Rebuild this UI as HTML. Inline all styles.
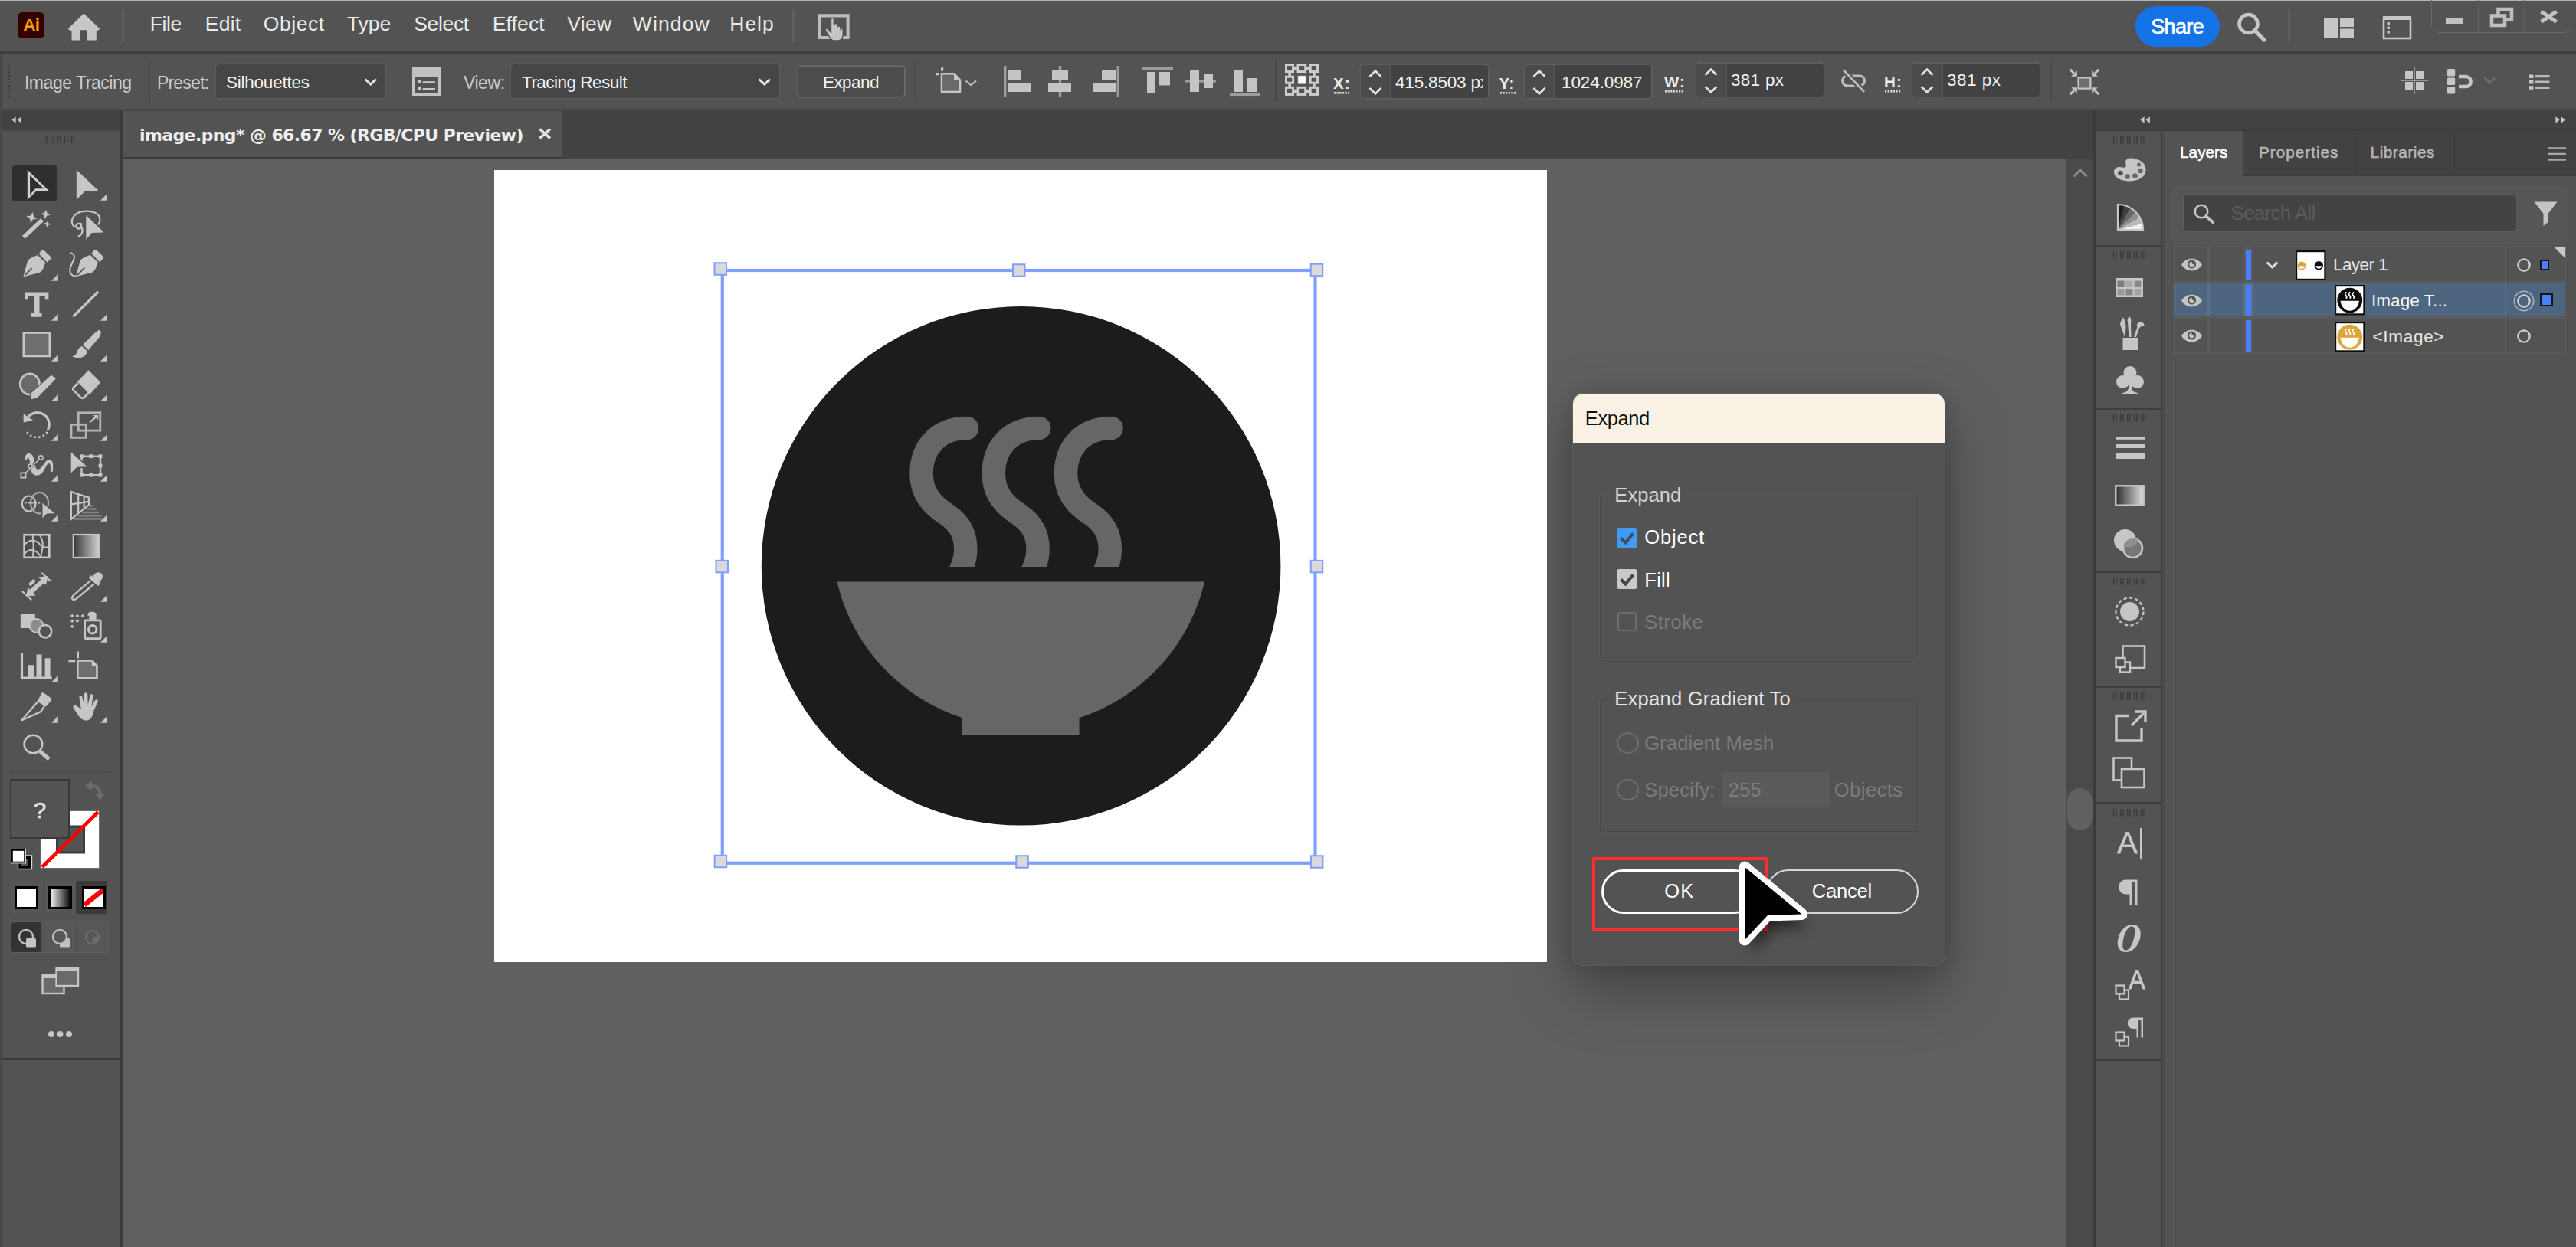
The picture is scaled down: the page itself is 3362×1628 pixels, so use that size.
<!DOCTYPE html>
<html lang="en"><head><meta charset="utf-8"><title>image.png* @ 66.67 % (RGB/CPU Preview)</title><style>
html,body{margin:0;padding:0;}
body{width:3362px;height:1628px;overflow:hidden;background:#606060;position:relative;
font-family:"Liberation Sans",sans-serif;}
#app{position:absolute;left:0;top:0;width:3362px;height:1628px;overflow:hidden;}
#app div,#app span,#app svg{position:absolute;display:block;}
#app span{white-space:pre;}
#app svg{overflow:visible;}
</style></head><body><div id="app">
<!-- canvas and frame -->
<div style="left:160px;top:207px;width:2536px;height:1421px;background:#606060;"></div>
<div style="left:2053px;top:514px;width:484.5px;height:745.5px;border-radius:13px;box-shadow:0 30px 80px 4px rgba(0,0,0,0.3),0 3px 26px rgba(0,0,0,0.14);"></div>
<div style="left:645px;top:221.5px;width:1374px;height:1034.5px;background:#ffffff;"></div><svg style="left:0px;top:0px;" width="3362" height="1628" viewBox="0 0 3362 1628"><circle cx="1332.6" cy="738.8" r="338.8" fill="#1d1c1a"/><clipPath id="bowlclip"><rect x="1080" y="759.5" width="510" height="179"/></clipPath><circle cx="1332.25" cy="702.7" r="246.6" fill="#666666" clip-path="url(#bowlclip)"/><rect x="1256" y="930" width="152.5" height="29" fill="#666666"/><clipPath id="steamclip"><rect x="1150" y="520" width="360" height="220"/></clipPath><path d="M 1262 559 C 1222 559, 1202.5 587, 1202.5 618 C 1202.5 646, 1219 661, 1236 672 C 1252 683, 1262 698, 1260 722 C 1259.5 730, 1257 738, 1253 746" transform="translate(0 0)" fill="none" stroke="#666666" stroke-width="30.5" stroke-linecap="round" clip-path="url(#steamclip)"/><path d="M 1262 559 C 1222 559, 1202.5 587, 1202.5 618 C 1202.5 646, 1219 661, 1236 672 C 1252 683, 1262 698, 1260 722 C 1259.5 730, 1257 738, 1253 746" transform="translate(94.25 0)" fill="none" stroke="#666666" stroke-width="30.5" stroke-linecap="round" clip-path="url(#steamclip)"/><path d="M 1262 559 C 1222 559, 1202.5 587, 1202.5 618 C 1202.5 646, 1219 661, 1236 672 C 1252 683, 1262 698, 1260 722 C 1259.5 730, 1257 738, 1253 746" transform="translate(188.5 0)" fill="none" stroke="#666666" stroke-width="30.5" stroke-linecap="round" clip-path="url(#steamclip)"/><rect x="942.75" y="353" width="773.75" height="773.75" fill="none" stroke="#7f9eff" stroke-width="4.2"/><rect x="932.5" y="343.25" width="15.5" height="15.5" fill="#d9d9d9" stroke="#7f9eff" stroke-width="2"/><rect x="1321.95" y="345.25" width="15.5" height="15.5" fill="#d9d9d9" stroke="#7f9eff" stroke-width="2"/><rect x="1710.75" y="344.75" width="15.5" height="15.5" fill="#d9d9d9" stroke="#7f9eff" stroke-width="2"/><rect x="934.45" y="731.85" width="15.5" height="15.5" fill="#d9d9d9" stroke="#7f9eff" stroke-width="2"/><rect x="1710.75" y="731.85" width="15.5" height="15.5" fill="#d9d9d9" stroke="#7f9eff" stroke-width="2"/><rect x="932.65" y="1116.75" width="15.5" height="15.5" fill="#d9d9d9" stroke="#7f9eff" stroke-width="2"/><rect x="1326.25" y="1117.25" width="15.5" height="15.5" fill="#d9d9d9" stroke="#7f9eff" stroke-width="2"/><rect x="1710.95" y="1117.25" width="15.5" height="15.5" fill="#d9d9d9" stroke="#7f9eff" stroke-width="2"/></svg>
<div style="left:2696px;top:207px;width:36px;height:1421px;background:#4a4a4a;"></div><svg style="left:2704px;top:218px;" width="22" height="16" viewBox="0 0 22 16"><path d="M2.5 12.5 L11 4 L19.5 12.5" fill="none" stroke="#8c8c8c" stroke-width="3"/></svg>
<div style="left:2698px;top:1029px;width:33px;height:54.5px;background:#606060;border-radius:16.5px;"></div>
<div style="left:0px;top:0px;width:3362px;height:67.5px;background:#535353;"></div>
<div style="left:0px;top:0px;width:3362px;height:1px;background:#b4b4b4;"></div>
<div style="left:0px;top:67px;width:3362px;height:2.5px;background:#3e3e3e;"></div>
<div style="left:0px;top:69.5px;width:3362px;height:73px;background:#535353;"></div>
<div style="left:0px;top:69.5px;width:2px;height:73px;background:#474747;"></div>
<div style="left:0px;top:142px;width:3362px;height:2.8px;background:#474747;"></div>
<div style="left:160px;top:144.6px;width:2572px;height:62.4px;background:#424242;"></div>
<div style="left:161px;top:145.3px;width:572.5px;height:60.2px;background:#535353;"></div>
<div style="left:161px;top:205px;width:572.5px;height:2px;background:#3c3c3c;"></div><span style="left:182.01px;top:165.76px;font-size:21.9px;line-height:21.9px;color:#eeeeee;font-family:'DejaVu Sans', 'Liberation Sans', sans-serif;font-weight:700;letter-spacing:-0.54px;">image.png* @ 66.67 % (RGB/CPU Preview)</span>
<svg style="left:702px;top:166px;" width="19" height="17" viewBox="0 0 19 17"><path d="M2.5 2.5 L16 14.5 M16 2.5 L2.5 14.5" stroke="#e4e4e4" stroke-width="3.6" fill="none"/></svg>
<div style="left:0px;top:144.6px;width:156.5px;height:24.2px;background:#424242;"></div>
<div style="left:0px;top:168.8px;width:156.5px;height:2.6px;background:#464646;"></div>
<div style="left:0px;top:171.4px;width:156.5px;height:1456.6px;background:#535353;border-radius:4px 0 0 0;"></div>
<div style="left:0px;top:144.6px;width:2px;height:1483.4px;background:#474747;"></div>
<div style="left:156.5px;top:144.6px;width:3.8px;height:1483.4px;background:#3a3a3a;"></div>
<div style="left:2px;top:1381px;width:154.5px;height:2.5px;background:#3a3a3a;"></div><svg style="left:15.2px;top:151.8px;" width="14" height="9" viewBox="0 0 14 9"><path d="M5.6 0.300 L5.600 8.700 L0.400 4.500 Z M12.800 0.300 L12.800 8.700 L7.600 4.500 Z" fill="#c8c8c8"/></svg>
<svg style="left:57.4px;top:177.7px;" width="42" height="9" viewBox="0 0 42 9"><rect x="0" y="0" width="1.400" height="9" fill="#3a3a3a"/><rect x="3.2" y="0" width="1.400" height="9" fill="#3a3a3a"/><rect x="8.97" y="0" width="1.400" height="9" fill="#3a3a3a"/><rect x="12.17" y="0" width="1.400" height="9" fill="#3a3a3a"/><rect x="17.94" y="0" width="1.400" height="9" fill="#3a3a3a"/><rect x="21.14" y="0" width="1.400" height="9" fill="#3a3a3a"/><rect x="26.91" y="0" width="1.400" height="9" fill="#3a3a3a"/><rect x="30.11" y="0" width="1.400" height="9" fill="#3a3a3a"/><rect x="35.88" y="0" width="1.400" height="9" fill="#3a3a3a"/><rect x="39.08" y="0" width="1.400" height="9" fill="#3a3a3a"/></svg>
<div style="left:2732px;top:144.6px;width:3.5px;height:1483.4px;background:#3a3a3a;"></div>
<div style="left:2735.5px;top:144.6px;width:626.5px;height:24.4px;background:#424242;"></div>
<div style="left:2735.5px;top:169px;width:626.5px;height:2.2px;background:#3d3d3d;"></div><svg style="left:2792.5px;top:151.8px;" width="14" height="9" viewBox="0 0 14 9"><path d="M5.600 0.300 L5.600 8.700 L0.400 4.500 Z M12.800 0.300 L12.800 8.700 L7.600 4.500 Z" fill="#c8c8c8"/></svg>
<svg style="left:3335.3px;top:151.8px;" width="14" height="9" viewBox="0 0 14 9"><path d="M0.400 0.300 L0.400 8.700 L5.600 4.500 Z M7.600 0.300 L7.600 8.700 L12.800 4.500 Z" fill="#c8c8c8"/></svg>
<div style="left:2735.5px;top:171px;width:84px;height:1457px;background:#535353;"></div>
<div style="left:2819.5px;top:171px;width:2.5px;height:1457px;background:#3a3a3a;"></div>
<div style="left:2822px;top:171px;width:2.5px;height:1457px;background:#4b4b4b;"></div>
<div style="left:2824.5px;top:171px;width:537.5px;height:1457px;background:#535353;"></div>
<!-- menu bar and control bar -->
<div style="left:22.7px;top:16px;width:35.2px;height:34px;background:#330000;border-radius:6px;"></div><span style="left:30.29px;top:21.95px;font-size:22.5px;line-height:22.5px;color:#ff9a00;font-weight:700;letter-spacing:-0.88px;">Ai</span>
<svg style="left:88px;top:17px;" width="44" height="37" viewBox="0 0 44 37"><path d="M21.3 0.5 L42.5 20.8 L37.8 24 L37.8 35.5 L25.6 35.5 L25.6 22.3 L17 22.3 L17 35.5 L5.5 35.5 L5.5 24 L0.5 20.8 Z" fill="#c6c6c6"/></svg>
<div style="left:159.3px;top:11.5px;width:3px;height:43.5px;background:#5e5e5e;"></div><span style="left:195.81px;top:17.57px;font-size:26.5px;line-height:26.5px;color:#eaeaea;letter-spacing:-0.44px;">File</span>
<span style="left:267.81px;top:17.57px;font-size:26.5px;line-height:26.5px;color:#eaeaea;letter-spacing:0.24px;">Edit</span>
<span style="left:343.81px;top:17.57px;font-size:26.5px;line-height:26.5px;color:#eaeaea;letter-spacing:0.56px;">Object</span>
<span style="left:452.81px;top:17.57px;font-size:26.5px;line-height:26.5px;color:#eaeaea;letter-spacing:-0.02px;">Type</span>
<span style="left:540.31px;top:17.57px;font-size:26.5px;line-height:26.5px;color:#eaeaea;letter-spacing:-0.35px;">Select</span>
<span style="left:642.81px;top:17.57px;font-size:26.5px;line-height:26.5px;color:#eaeaea;letter-spacing:0.12px;">Effect</span>
<span style="left:740.31px;top:17.57px;font-size:26.5px;line-height:26.5px;color:#eaeaea;letter-spacing:0.31px;">View</span>
<span style="left:825.81px;top:17.57px;font-size:26.5px;line-height:26.5px;color:#eaeaea;letter-spacing:1.13px;">Window</span>
<span style="left:952.31px;top:17.57px;font-size:26.5px;line-height:26.5px;color:#eaeaea;letter-spacing:0.96px;">Help</span>
<div style="left:1033.8px;top:11.5px;width:3px;height:43.5px;background:#5e5e5e;"></div><svg style="left:1066px;top:17px;" width="44" height="37" viewBox="0 0 44 37"><path d="M17.500 32 L3.300 32 L3.300 3.400 L40.600 3.400 L40.600 32 L34 32" fill="none" stroke="#bcbcbc" stroke-width="4.100"/><path d="M18.500 8.200 C18.500 5.800 22.300 5.800 22.300 8.200 L22.300 16 C22.800 12.800 26.500 12.800 26.800 15.500 L27 18.300 C27.500 16.300 30.500 16.500 30.800 18.800 L31 20.800 C31.800 19.300 34.200 19.800 34.200 22 L34.200 28 C34.200 32.500 31.500 35.900 28 35.900 L22.500 35.900 C19.500 35.900 17.800 33.500 15.500 29.500 L11.500 22.800 C10.300 20.800 12.800 19 14.500 21 L18.500 25.500 Z" fill="#c6c6c6" stroke="#535353" stroke-width="1.400"/></svg>
<div style="left:2787px;top:7.5px;width:109.5px;height:53.5px;background:#1473e6;border-radius:27px;"></div><span style="left:2807.28px;top:21.64px;font-size:27px;line-height:27px;color:#ffffff;letter-spacing:-0.65px;-webkit-text-stroke:0.7px #ffffff;">Share</span>
<svg style="left:2918px;top:14px;" width="42" height="42" viewBox="0 0 42 42"><circle cx="16.5" cy="17" r="12" fill="none" stroke="#c6c6c6" stroke-width="4.6"/><path d="M25 26 L37 38" stroke="#c6c6c6" stroke-width="5" stroke-linecap="round"/></svg>
<div style="left:2985.8px;top:11.5px;width:3px;height:43.5px;background:#5e5e5e;"></div><svg style="left:3033px;top:24px;" width="39" height="26" viewBox="0 0 39 26"><rect x="0" y="0" width="18" height="25.5" fill="#c6c6c6"/><rect x="21" y="0" width="18" height="11" fill="#c6c6c6"/><rect x="21" y="13.5" width="18" height="12" fill="#c6c6c6"/></svg>
<svg style="left:3109px;top:20px;" width="39" height="32" viewBox="0 0 39 32"><rect x="2" y="4" width="35" height="26" fill="none" stroke="#c6c6c6" stroke-width="2.6"/><rect x="1" y="1" width="37" height="5" fill="#c6c6c6"/><rect x="6.5" y="9" width="3.5" height="3.5" fill="#c6c6c6"/><rect x="6.5" y="14.5" width="3.5" height="3.5" fill="#c6c6c6"/><rect x="6.5" y="20" width="3.5" height="3.5" fill="#c6c6c6"/></svg>
<div style="left:3173px;top:-3px;width:183px;height:45.5px;border:1.5px solid #686868;border-radius:0 0 10px 10px;box-sizing:border-box;"></div>
<div style="left:3234px;top:0px;width:1.5px;height:42px;background:#626262;"></div>
<div style="left:3294px;top:0px;width:1.5px;height:42px;background:#626262;"></div>
<div style="left:3192px;top:23px;width:23px;height:8px;background:#c2c2c2;"></div><svg style="left:3248px;top:8px;" width="35" height="29" viewBox="0 0 35 29"><rect x="12.5" y="4" width="17.5" height="13.5" fill="none" stroke="#bdbdbd" stroke-width="4.600"/><rect x="4" y="12.500" width="17" height="12.500" fill="#535353" stroke="#bdbdbd" stroke-width="4.600"/></svg>
<svg style="left:3313px;top:13px;" width="27" height="18" viewBox="0 0 27 18"><path d="M3.5 2 L23.5 15.5 M23.5 2 L3.5 15.5" stroke="#c2c2c2" stroke-width="5"/></svg>
<svg style="left:9.5px;top:85px;" width="4" height="43" viewBox="0 0 4 43"><rect x="0" y="0" width="3" height="1.6" fill="#3d3d3d"/><rect x="0" y="4.4" width="3" height="1.6" fill="#3d3d3d"/><rect x="0" y="8.8" width="3" height="1.6" fill="#3d3d3d"/><rect x="0" y="13.2" width="3" height="1.6" fill="#3d3d3d"/><rect x="0" y="17.6" width="3" height="1.6" fill="#3d3d3d"/><rect x="0" y="22" width="3" height="1.6" fill="#3d3d3d"/><rect x="0" y="26.4" width="3" height="1.6" fill="#3d3d3d"/><rect x="0" y="30.8" width="3" height="1.6" fill="#3d3d3d"/><rect x="0" y="35.2" width="3" height="1.6" fill="#3d3d3d"/><rect x="0" y="39.6" width="3" height="1.6" fill="#3d3d3d"/></svg>
<span style="left:31.96px;top:97.03px;font-size:23px;line-height:23px;color:#cbcbcb;letter-spacing:-0.47px;">Image Tracing</span>
<div style="left:193.5px;top:78px;width:2px;height:55px;background:#4a4a4a;"></div><span style="left:204.97px;top:97.03px;font-size:23px;line-height:23px;color:#cbcbcb;letter-spacing:-0.8px;">Preset:</span>
<div style="left:282px;top:84px;width:221px;height:43.5px;background:#464646;border-radius:4px;box-shadow:0 0 0 1.5px #5c5c5c;"></div><span style="left:294.99px;top:96.95px;font-size:22.5px;line-height:22.5px;color:#f2f2f2;letter-spacing:-0.23px;">Silhouettes</span>
<svg style="left:474.5px;top:101.5px;" width="17.5" height="9.5" viewBox="0 0 17.5 9.5"><path d="M1.5 1.5 L8.75 8 L16 1.5" fill="none" stroke="#e8e8e8" stroke-width="3"/></svg>
<svg style="left:538px;top:88px;" width="37" height="37" viewBox="0 0 37 37"><rect x="0" y="0" width="37" height="37" fill="#c2c2c2"/><rect x="3.400" y="13" width="29.500" height="20.300" fill="#535353"/><rect x="6.900" y="16" width="5.200" height="5" fill="#c8c8c8"/><rect x="13.800" y="18.200" width="16.100" height="2.800" fill="#c8c8c8"/><rect x="6.900" y="24.900" width="5.200" height="4.900" fill="#c8c8c8"/><rect x="13.800" y="27" width="16.100" height="2.800" fill="#c8c8c8"/></svg>
<span style="left:604.97px;top:97.03px;font-size:23px;line-height:23px;color:#cbcbcb;letter-spacing:-0.44px;">View:</span>
<div style="left:667px;top:84px;width:350px;height:43.5px;background:#464646;border-radius:4px;box-shadow:0 0 0 1.5px #5c5c5c;"></div><span style="left:680.99px;top:96.95px;font-size:22.5px;line-height:22.5px;color:#f2f2f2;letter-spacing:-0.51px;">Tracing Result</span>
<svg style="left:989px;top:101.5px;" width="17.5" height="9.5" viewBox="0 0 17.5 9.5"><path d="M1.5 1.5 L8.75 8 L16 1.5" fill="none" stroke="#e8e8e8" stroke-width="3"/></svg>
<div style="left:1042px;top:87px;width:138px;height:39px;background:#4c4c4c;border-radius:4px;box-shadow:0 0 0 1.5px #6e6e6e;"></div><span style="left:1073.99px;top:96.95px;font-size:22.5px;line-height:22.5px;color:#f2f2f2;letter-spacing:-0.56px;">Expand</span>
<div style="left:1193.5px;top:78px;width:2px;height:55px;background:#4a4a4a;"></div><svg style="left:1220px;top:87px;" width="36" height="36" viewBox="0 0 36 36"><path d="M9.6 1.2 L9.6 5.8 M1.2 9.7 L6 9.7" stroke="#c6c6c6" stroke-width="3.2"/><path d="M8.900 9.200 L25.300 9.200 L33.100 17.400 L33.100 32.900 L8.900 32.900 Z" fill="#6a6a6a" stroke="#c6c6c6" stroke-width="2.400"/><path d="M25 8.400 L34 17.800 L25 17.800 Z" fill="#c6c6c6"/></svg>
<svg style="left:1258.7px;top:104.3px;" width="16.5" height="8.6" viewBox="0 0 16.5 8.6"><path d="M1.5 1.5 L8.25 7.1 L15 1.5" fill="none" stroke="#b5b5b5" stroke-width="2.3"/></svg>
<svg style="left:0px;top:0px;" width="3362" height="140" viewBox="0 0 3362 140"><rect x="1310" y="86" width="3.4" height="41" fill="#9d9d9d"/><rect x="1316" y="91" width="17" height="13" fill="#c4c4c4"/><rect x="1316" y="109" width="29" height="11" fill="#c4c4c4"/><rect x="1381.8" y="86" width="3.4" height="41" fill="#9d9d9d"/><rect x="1373" y="91" width="21" height="13" fill="#c4c4c4"/><rect x="1368" y="109" width="30" height="11" fill="#c4c4c4"/><rect x="1457.6" y="86" width="3.4" height="41" fill="#9d9d9d"/><rect x="1438" y="91" width="18" height="13" fill="#c4c4c4"/><rect x="1426" y="109" width="30" height="11" fill="#c4c4c4"/><rect x="1491" y="88" width="40" height="3.6" fill="#9d9d9d"/><rect x="1497" y="94" width="11" height="27.5" fill="#c4c4c4"/><rect x="1513" y="94" width="14" height="17.5" fill="#c4c4c4"/><rect x="1547" y="104" width="40" height="3.6" fill="#9d9d9d"/><rect x="1553" y="91" width="12" height="29" fill="#c4c4c4"/><rect x="1571" y="96" width="12" height="19" fill="#c4c4c4"/><rect x="1605" y="121.5" width="40" height="3.6" fill="#9d9d9d"/><rect x="1611" y="91" width="11" height="29" fill="#c4c4c4"/><rect x="1627" y="102" width="14" height="18" fill="#c4c4c4"/></svg>
<div style="left:1664px;top:78px;width:2px;height:55px;background:#4a4a4a;"></div><svg style="left:1676.5px;top:83px;" width="45" height="42" viewBox="0 0 45 42"><rect x="1.5" y="1.5" width="9.1" height="9.1" fill="none" stroke="#cdcdcd" stroke-width="3"/><rect x="17" y="1.5" width="9.7" height="9.1" fill="none" stroke="#cdcdcd" stroke-width="3"/><rect x="33.2" y="1.5" width="9.4" height="9.1" fill="none" stroke="#cdcdcd" stroke-width="3"/><rect x="1.5" y="17.3" width="9.1" height="7.9" fill="none" stroke="#cdcdcd" stroke-width="3"/><rect x="33.2" y="17.3" width="9.4" height="7.9" fill="none" stroke="#cdcdcd" stroke-width="3"/><rect x="1.5" y="31.3" width="9.1" height="9.1" fill="none" stroke="#cdcdcd" stroke-width="3"/><rect x="17" y="31.3" width="9.7" height="9.1" fill="none" stroke="#cdcdcd" stroke-width="3"/><rect x="33.2" y="31.3" width="9.4" height="9.1" fill="none" stroke="#cdcdcd" stroke-width="3"/><rect x="11.8" y="3.9" width="4" height="4.3" fill="#cdcdcd"/><rect x="27.9" y="3.9" width="4.1" height="4.3" fill="#cdcdcd"/><rect x="11.8" y="33.7" width="4" height="4.3" fill="#cdcdcd"/><rect x="27.9" y="33.7" width="4.1" height="4.3" fill="#cdcdcd"/><rect x="4.3" y="11.8" width="3.7" height="4.3" fill="#cdcdcd"/><rect x="4.3" y="26.4" width="3.7" height="3.7" fill="#cdcdcd"/><rect x="36" y="11.8" width="3.7" height="4.3" fill="#cdcdcd"/><rect x="36" y="26.4" width="3.7" height="3.7" fill="#cdcdcd"/><rect x="16.8" y="15.8" width="11.2" height="10.9" fill="#d6d6d6"/><rect x="17.8" y="16.7" width="9.200" height="8" fill="#ffffff"/></svg>
<span style="left:1740.08px;top:98.65px;font-size:20.5px;line-height:20.5px;color:#ececec;font-weight:700;letter-spacing:1.34px;">X:</span>
<svg style="left:1741px;top:119.5px;" width="22" height="3" viewBox="0 0 22 3"><rect x="0" y="0" width="2.2" height="2.6" fill="#d8d8d8"/><rect x="3.6" y="0" width="2.2" height="2.6" fill="#d8d8d8"/><rect x="7.2" y="0" width="2.2" height="2.6" fill="#d8d8d8"/><rect x="10.8" y="0" width="2.2" height="2.6" fill="#d8d8d8"/><rect x="14.4" y="0" width="2.2" height="2.6" fill="#d8d8d8"/><rect x="18" y="0" width="2.2" height="2.6" fill="#d8d8d8"/></svg>
<div style="left:1776px;top:84.5px;width:165.5px;height:43px;background:#424242;border-radius:4px;box-shadow:0 0 0 1.5px #5e5e5e;"></div>
<div style="left:1776px;top:84.5px;width:38px;height:43px;background:#4b4b4b;border-radius:4px 0 0 4px;"></div>
<div style="left:1814px;top:84.5px;width:2px;height:43px;background:#5a5a5a;"></div><svg style="left:1786px;top:89.5px;" width="18" height="12" viewBox="0 0 18 12"><path d="M1.5 10 L9 2.5 L16.5 10" fill="none" stroke="#e4e4e4" stroke-width="2.6"/></svg>
<svg style="left:1786px;top:112.5px;" width="18" height="12" viewBox="0 0 18 12"><path d="M1.5 2 L9 9.5 L16.5 2" fill="none" stroke="#e4e4e4" stroke-width="2.6"/></svg>
<div style="left:1818px;top:86px;width:117.5px;height:40px;overflow:hidden;"><span style="left:2.99px;top:11.45px;font-size:22.5px;line-height:22.5px;color:#f2f2f2;letter-spacing:-0.18px;">415.8503 px</span>
</div><span style="left:1956.58px;top:98.65px;font-size:20.5px;line-height:20.5px;color:#ececec;font-weight:700;letter-spacing:0.87px;">Y:</span>
<svg style="left:1957.5px;top:119.5px;" width="20" height="3" viewBox="0 0 20 3"><rect x="0" y="0" width="2.2" height="2.6" fill="#d8d8d8"/><rect x="3.6" y="0" width="2.2" height="2.6" fill="#d8d8d8"/><rect x="7.2" y="0" width="2.2" height="2.6" fill="#d8d8d8"/><rect x="10.8" y="0" width="2.2" height="2.6" fill="#d8d8d8"/><rect x="14.4" y="0" width="2.2" height="2.6" fill="#d8d8d8"/><rect x="18" y="0" width="2.2" height="2.6" fill="#d8d8d8"/></svg>
<div style="left:1990px;top:84.5px;width:165px;height:43px;background:#424242;border-radius:4px;box-shadow:0 0 0 1.5px #5e5e5e;"></div>
<div style="left:1990px;top:84.5px;width:38px;height:43px;background:#4b4b4b;border-radius:4px 0 0 4px;"></div>
<div style="left:2028px;top:84.5px;width:2px;height:43px;background:#5a5a5a;"></div><svg style="left:2000px;top:89.5px;" width="18" height="12" viewBox="0 0 18 12"><path d="M1.5 10 L9 2.5 L16.5 10" fill="none" stroke="#e4e4e4" stroke-width="2.6"/></svg>
<svg style="left:2000px;top:112.5px;" width="18" height="12" viewBox="0 0 18 12"><path d="M1.5 2 L9 9.5 L16.5 2" fill="none" stroke="#e4e4e4" stroke-width="2.6"/></svg>
<span style="left:2037.99px;top:97.45px;font-size:22.5px;line-height:22.5px;color:#f2f2f2;letter-spacing:-0.1px;">1024.0987</span>
<span style="left:2172.08px;top:96.65px;font-size:20.5px;line-height:20.5px;color:#ececec;font-weight:700;letter-spacing:1.04px;">W:</span>
<svg style="left:2173px;top:117.5px;" width="27" height="3" viewBox="0 0 27 3"><rect x="0" y="0" width="2.2" height="2.6" fill="#d8d8d8"/><rect x="3.6" y="0" width="2.2" height="2.6" fill="#d8d8d8"/><rect x="7.2" y="0" width="2.2" height="2.6" fill="#d8d8d8"/><rect x="10.8" y="0" width="2.2" height="2.6" fill="#d8d8d8"/><rect x="14.4" y="0" width="2.2" height="2.6" fill="#d8d8d8"/><rect x="18" y="0" width="2.2" height="2.6" fill="#d8d8d8"/><rect x="21.6" y="0" width="2.2" height="2.6" fill="#d8d8d8"/></svg>
<div style="left:2213.5px;top:82.5px;width:166.5px;height:43px;background:#424242;border-radius:4px;box-shadow:0 0 0 1.5px #5e5e5e;"></div>
<div style="left:2213.5px;top:82.5px;width:38px;height:43px;background:#4b4b4b;border-radius:4px 0 0 4px;"></div>
<div style="left:2251.5px;top:82.5px;width:2px;height:43px;background:#5a5a5a;"></div><svg style="left:2223.5px;top:87.5px;" width="18" height="12" viewBox="0 0 18 12"><path d="M1.5 10 L9 2.5 L16.5 10" fill="none" stroke="#e4e4e4" stroke-width="2.6"/></svg>
<svg style="left:2223.5px;top:110.5px;" width="18" height="12" viewBox="0 0 18 12"><path d="M1.5 2 L9 9.5 L16.5 2" fill="none" stroke="#e4e4e4" stroke-width="2.6"/></svg>
<span style="left:2258.99px;top:94.25px;font-size:22.5px;line-height:22.5px;color:#f2f2f2;letter-spacing:0.29px;">381 px</span>
<svg style="left:2402px;top:89px;" width="36" height="33" viewBox="0 0 36 33"><rect x="2.5" y="10" width="29" height="13" rx="6.500" fill="none" stroke="#bdbdbd" stroke-width="3"/><path d="M4 2.5 L31 31" stroke="#535353" stroke-width="7"/><path d="M4 2.5 L31 31" stroke="#bdbdbd" stroke-width="2.600"/></svg>
<span style="left:2459.08px;top:96.65px;font-size:20.5px;line-height:20.5px;color:#ececec;font-weight:700;letter-spacing:1.21px;">H:</span>
<svg style="left:2460px;top:118px;" width="23" height="3" viewBox="0 0 23 3"><rect x="0" y="0" width="2.2" height="2.6" fill="#d8d8d8"/><rect x="3.6" y="0" width="2.2" height="2.6" fill="#d8d8d8"/><rect x="7.2" y="0" width="2.2" height="2.6" fill="#d8d8d8"/><rect x="10.8" y="0" width="2.2" height="2.6" fill="#d8d8d8"/><rect x="14.4" y="0" width="2.2" height="2.6" fill="#d8d8d8"/><rect x="18" y="0" width="2.2" height="2.6" fill="#d8d8d8"/></svg>
<div style="left:2495.5px;top:82.5px;width:166.5px;height:43px;background:#424242;border-radius:4px;box-shadow:0 0 0 1.5px #5e5e5e;"></div>
<div style="left:2495.5px;top:82.5px;width:38.5px;height:43px;background:#4b4b4b;border-radius:4px 0 0 4px;"></div>
<div style="left:2534px;top:82.5px;width:2px;height:43px;background:#5a5a5a;"></div><svg style="left:2505.75px;top:87.5px;" width="18" height="12" viewBox="0 0 18 12"><path d="M1.5 10 L9 2.5 L16.5 10" fill="none" stroke="#e4e4e4" stroke-width="2.6"/></svg>
<svg style="left:2505.75px;top:110.5px;" width="18" height="12" viewBox="0 0 18 12"><path d="M1.5 2 L9 9.5 L16.5 2" fill="none" stroke="#e4e4e4" stroke-width="2.6"/></svg>
<span style="left:2540.99px;top:94.25px;font-size:22.5px;line-height:22.5px;color:#f2f2f2;letter-spacing:0.49px;">381 px</span>
<div style="left:2675.5px;top:78px;width:2px;height:55px;background:#4a4a4a;"></div><svg style="left:2700.5px;top:89.5px;" width="39" height="34" viewBox="0 0 39 34"><rect x="11.600" y="11.400" width="15.800" height="14.200" fill="#6e6e6e" stroke="#c6c6c6" stroke-width="2.200"/><path d="M0.8 0.8 l5 5" stroke="#c6c6c6" stroke-width="3"/><path d="M9.8 9.8 l-7.6 0 l7.6 -7.6 Z" fill="#c6c6c6"/><path d="M38.2 0.8 l-5 5" stroke="#c6c6c6" stroke-width="3"/><path d="M29.2 9.8 l7.6 0 l-7.6 -7.6 Z" fill="#c6c6c6"/><path d="M0.8 33.2 l5 -5" stroke="#c6c6c6" stroke-width="3"/><path d="M9.8 24.2 l-7.6 0 l7.6 7.6 Z" fill="#c6c6c6"/><path d="M38.2 33.2 l-5 -5" stroke="#c6c6c6" stroke-width="3"/><path d="M29.2 24.2 l7.6 0 l-7.6 7.6 Z" fill="#c6c6c6"/></svg>
<svg style="left:3133.3px;top:87px;" width="36" height="37" viewBox="0 0 36 37"><rect x="6" y="6" width="10" height="10" fill="#c6c6c6"/><rect x="20" y="6" width="10" height="10" fill="#c6c6c6"/><rect x="6" y="20" width="10" height="10" fill="#c6c6c6"/><rect x="20" y="20" width="10" height="10" fill="#c6c6c6"/><path d="M18 0 L18 36 M0 18 L36 18" stroke="#9a9a9a" stroke-width="1.8"/></svg>
<svg style="left:3192px;top:89px;" width="37" height="35" viewBox="0 0 37 35"><rect x="2" y="1" width="10.200" height="9.500" rx="1.500" fill="#c6c6c6"/><rect x="2" y="12.500" width="10.200" height="9.500" rx="1.500" fill="#c6c6c6"/><rect x="2" y="24" width="10.200" height="9.500" rx="1.500" fill="#c6c6c6"/><path d="M17 11 L26 11 C35 11 35 24 26 24 L17 24" fill="none" stroke="#c6c6c6" stroke-width="4.4"/></svg>
<svg style="left:3241px;top:100px;" width="16.5" height="9.5" viewBox="0 0 16.5 9.5"><path d="M1.5 1.5 L8.25 8 L15 1.5" fill="none" stroke="#6f6f6f" stroke-width="2.4"/></svg>
<svg style="left:3300.5px;top:96.5px;" width="28" height="21" viewBox="0 0 28 21"><path d="M0 2.700 L5.400 2.700 M0 10.200 L5.400 10.200 M0 17.500 L5.400 17.500" stroke="#c6c6c6" stroke-width="4.400"/><path d="M7.500 2.700 L26.500 2.700 M7.500 10.200 L26.500 10.200 M7.500 17.500 L26.500 17.500" stroke="#b9b9b9" stroke-width="3.200"/></svg>
<!-- tools panel -->
<div style="left:16px;top:216px;width:59px;height:46.7px;background:#2f2f2f;border-radius:3.5px;"></div><svg style="left:22.5px;top:215.5px;" width="48" height="48" viewBox="0 0 48 48"><path d="M12.8 5.8 L41 33.3 L24.5 33.3 L12.8 45 Z" fill="#d2d2d2"/><path d="M16.1 13 L34.2 30.3 L23.2 30.3 L16.1 38.3 Z" fill="#2f2f2f"/></svg>
<svg style="left:90px;top:215.5px;" width="48" height="48" viewBox="0 0 48 48"><path d="M9.8 5.800 L37.900 32.200 L37.900 33.800 L21 33.800 L9.800 44.500 Z" fill="#c6c6c6"/></svg>
<svg style="left:131.4px;top:252.7px;" width="8.8" height="8.8" viewBox="0 0 8.8 8.8"><path d="M8.8 0 L8.8 8.8 L0 8.8 Z" fill="#c6c6c6"/></svg>
<svg style="left:22.5px;top:267.95px;" width="48" height="48" viewBox="0 0 48 48"><path d="M9.700 43.800 L5.900 40 L30.200 17.100 L34 21 Z" fill="#c6c6c6"/><path d="M19.9 8.96 L20.82 14.43 L25.44 17.5 L19.97 18.42 L16.9 23.04 L15.98 17.57 L11.36 14.5 L16.83 13.58 Z" fill="#c6c6c6"/><path d="M37.36 5.66 L38.48 10.31 L42.64 12.66 L37.99 13.78 L35.64 17.94 L34.52 13.29 L30.36 10.94 L35.01 9.82 Z" fill="#c6c6c6"/><path d="M39.34 19.74 L40.17 23.19 L43.26 24.94 L39.81 25.77 L38.06 28.86 L37.23 25.41 L34.14 23.66 L37.59 22.83 Z" fill="#c6c6c6"/></svg>
<svg style="left:90px;top:267.95px;" width="48" height="48" viewBox="0 0 48 48"><path d="M22.300 7.600 C12 7.600 3.800 13.500 3.800 21.700 C3.800 26 7 28.500 10.500 28.300 M22.300 7.600 C33 7.600 40.400 11.500 40.400 18.200 C40.400 21 39.500 23.500 38 25.500" fill="none" stroke="#c6c6c6" stroke-width="2.200"/><circle cx="12.800" cy="27.300" r="3.400" fill="none" stroke="#c6c6c6" stroke-width="2.200"/><circle cx="15.800" cy="24.500" r="1.500" fill="#c6c6c6"/><path d="M16.300 29 C19 33 17.500 38.500 11.700 41.200" fill="none" stroke="#c6c6c6" stroke-width="2.200"/><path d="M22.300 13 L44.800 34.400 L44.800 35.500 L29.800 35.900 L22.300 44.700 Z" fill="#c6c6c6"/></svg>
<svg style="left:22.5px;top:320.4px;" width="48" height="48" viewBox="0 0 48 48"><path d="M7.300 41.600 L12.400 23 C13.300 19.800 15 18 18 16.600 L26 13 L36.300 22.900 L33.200 30.700 C32 33.600 30.200 35.300 27 36.300 Z" fill="#c6c6c6"/><path d="M9.800 39.200 L18.600 29.800" stroke="#535353" stroke-width="1.800"/><path d="M27.800 11.200 L30.800 7.300 C31.800 6 33.400 5.900 34.600 7 L42.600 14.700 C43.800 15.900 43.800 17.400 42.700 18.600 L38.300 22.400 Z" fill="#c6c6c6"/></svg>
<svg style="left:66.5px;top:357.6px;" width="8.8" height="8.8" viewBox="0 0 8.8 8.8"><path d="M8.8 0 L8.8 8.8 L0 8.8 Z" fill="#c6c6c6"/></svg>
<svg style="left:90px;top:320.4px;" width="48" height="48" viewBox="0 0 48 48"><g transform="translate(1.600 -0.300)"><path d="M7.300 41.600 L12.400 23 C13.300 19.800 15 18 18 16.600 L26 13 L36.300 22.900 L33.200 30.700 C32 33.600 30.200 35.300 27 36.300 Z" fill="#c6c6c6"/><path d="M9.800 39.200 L18.600 29.800" stroke="#535353" stroke-width="1.800"/><path d="M27.800 11.200 L30.800 7.300 C31.800 6 33.400 5.900 34.600 7 L42.600 14.700 C43.800 15.900 43.800 17.400 42.700 18.600 L38.300 22.400 Z" fill="#c6c6c6"/></g><path d="M1.600 9.900 C5.500 11 7.500 13 6.900 16.500 C6 22 1 27 1.200 33 C1.400 37.500 4 40.500 9.300 40.800" fill="none" stroke="#c6c6c6" stroke-width="2"/></svg>
<svg style="left:22.5px;top:372.85px;" width="48" height="48" viewBox="0 0 48 48"><path d="M9 8.600 L40.400 8.600 L40.400 18.300 L35.800 18.300 L35.800 13.500 L28.500 13.500 L28.500 36 L31.600 36 L31.600 40.800 L17.500 40.800 L17.500 36 L21.500 36 L21.500 13.500 L13.600 13.500 L13.600 18.300 L9 18.300 Z" fill="#c6c6c6"/></svg>
<svg style="left:66.5px;top:410.05px;" width="8.8" height="8.8" viewBox="0 0 8.8 8.8"><path d="M8.8 0 L8.8 8.8 L0 8.8 Z" fill="#c6c6c6"/></svg>
<svg style="left:90px;top:372.85px;" width="48" height="48" viewBox="0 0 48 48"><path d="M6.300 39.400 L37.200 8.700" stroke="#c6c6c6" stroke-width="3.400" stroke-linecap="round"/></svg>
<svg style="left:131.4px;top:410.05px;" width="8.8" height="8.8" viewBox="0 0 8.8 8.8"><path d="M8.8 0 L8.8 8.8 L0 8.8 Z" fill="#c6c6c6"/></svg>
<svg style="left:22.5px;top:425.3px;" width="48" height="48" viewBox="0 0 48 48"><rect x="7.800" y="9.500" width="34" height="30.500" fill="#6e6e6e" stroke="#c6c6c6" stroke-width="2.600"/></svg>
<svg style="left:66.5px;top:462.5px;" width="8.8" height="8.8" viewBox="0 0 8.8 8.8"><path d="M8.8 0 L8.8 8.8 L0 8.8 Z" fill="#c6c6c6"/></svg>
<svg style="left:90px;top:425.3px;" width="48" height="48" viewBox="0 0 48 48"><path d="M40.500 6.300 C42.500 7.800 42 11.500 39.500 15.500 L25.500 32 L18 25 L33 10.500 C36 7.500 39 5.300 40.500 6.300 Z" fill="#c6c6c6"/><path d="M17 27 L23.800 33.200 C23.500 40 15 45 4.200 40.600 C8 39.500 9.500 37.500 10.500 34.500 C11.700 30.500 14 27.700 17 27 Z" fill="#c6c6c6"/></svg>
<svg style="left:131.4px;top:462.5px;" width="8.8" height="8.8" viewBox="0 0 8.8 8.8"><path d="M8.8 0 L8.8 8.8 L0 8.8 Z" fill="#c6c6c6"/></svg>
<svg style="left:22.5px;top:477.75px;" width="48" height="48" viewBox="0 0 48 48"><ellipse cx="15.900" cy="23.500" rx="12.600" ry="13.600" fill="#6a6a6a" stroke="#c6c6c6" stroke-width="2.800"/><path d="M44 11.400 L49.800 16.500 L25.500 41.500 L17.300 43.300 L17.300 35.500 Z" fill="#535353" stroke="#535353" stroke-width="2.200" stroke-linejoin="round"/><path d="M44 11.400 L49.800 16.500 L25.500 41.500 L17.300 43.300 L17.300 35.500 Z" fill="#c6c6c6"/></svg>
<svg style="left:66.5px;top:514.95px;" width="8.8" height="8.8" viewBox="0 0 8.8 8.8"><path d="M8.8 0 L8.8 8.8 L0 8.8 Z" fill="#c6c6c6"/></svg>
<svg style="left:90px;top:477.75px;" width="48" height="48" viewBox="0 0 48 48"><path d="M25.400 5.200 L41.300 21.100 L27.200 36.900 L10.900 20.600 Z" fill="#c6c6c6"/><path d="M11.700 22 L6.300 27.500 C5 28.900 5 30.500 6.300 31.800 L15.300 40.800 C16.700 42.100 18.400 42 19.700 40.700 L25.700 35" fill="none" stroke="#c6c6c6" stroke-width="2.600"/></svg>
<svg style="left:131.4px;top:514.95px;" width="8.8" height="8.8" viewBox="0 0 8.8 8.8"><path d="M8.8 0 L8.8 8.8 L0 8.8 Z" fill="#c6c6c6"/></svg>
<svg style="left:22.5px;top:530.2px;" width="48" height="48" viewBox="0 0 48 48"><path d="M13.700 14.500 A15.400 15.400 0 0 1 39.400 31.200" fill="none" stroke="#c6c6c6" stroke-width="3.300"/><path d="M7.600 10.200 L7.600 21.600 L20.200 18.800 Z" fill="#c6c6c6"/><path d="M38.750 34.050 A16.300 16.300 0 0 1 10.400 31.070" fill="none" stroke="#c6c6c6" stroke-width="2.600" stroke-dasharray="2.400 3.300"/></svg>
<svg style="left:66.5px;top:567.4px;" width="8.8" height="8.8" viewBox="0 0 8.8 8.8"><path d="M8.8 0 L8.8 8.8 L0 8.8 Z" fill="#c6c6c6"/></svg>
<svg style="left:90px;top:530.2px;" width="48" height="48" viewBox="0 0 48 48"><rect x="3" y="24.300" width="19.300" height="17" fill="none" stroke="#b4b4b4" stroke-width="2.800"/><rect x="12.300" y="8.800" width="28.500" height="23.300" fill="none" stroke="#b4b4b4" stroke-width="2.800"/><path d="M27.200 21.500 L35.500 14" stroke="#c6c6c6" stroke-width="2.200"/><path d="M31.600 11.900 L38.200 11.900 L38.200 18.300 Z" fill="#c6c6c6"/></svg>
<svg style="left:131.4px;top:567.4px;" width="8.8" height="8.8" viewBox="0 0 8.8 8.8"><path d="M8.8 0 L8.8 8.8 L0 8.8 Z" fill="#c6c6c6"/></svg>
<svg style="left:22.5px;top:582.65px;" width="48" height="48" viewBox="0 0 48 48"><path d="M10.200 17.500 C8.700 11.500 12.500 8 16.300 9.300 C20.500 10.800 21.300 16 22.300 20.500 C23.300 25.500 23 29.500 26.500 29.800 C30.500 30 33 23.500 37 19.300 C40.300 15.800 45.300 16.500 46 22.500 C46.500 26.500 46 30 45.600 33 L42.800 33 C43 29 43.200 25.500 42.300 23.300 C41.500 21.300 39.800 22 38.300 24 C34.500 29.500 32.500 37.700 25 37.700 C17 37.700 17 28.500 16.200 21.500 C15.700 17.300 14.700 14.700 13.200 14.700 C12.200 14.700 12 16 12.500 17.500 Z" fill="#c6c6c6"/><path d="M7.300 37.500 L30.300 14.500" stroke="#535353" stroke-width="3.400"/><path d="M7.300 37.500 L30.300 14.500" stroke="#c6c6c6" stroke-width="1.400"/><rect x="4.300" y="34.400" width="6.200" height="6.200" fill="#535353" stroke="#c6c6c6" stroke-width="1.800"/><circle cx="16.600" cy="25.600" r="2.700" fill="#535353" stroke="#c6c6c6" stroke-width="1.500"/><circle cx="30.300" cy="14.500" r="2.700" fill="#535353" stroke="#c6c6c6" stroke-width="1.500"/></svg>
<svg style="left:66.5px;top:619.85px;" width="8.8" height="8.8" viewBox="0 0 8.8 8.8"><path d="M8.8 0 L8.8 8.8 L0 8.8 Z" fill="#c6c6c6"/></svg>
<svg style="left:90px;top:582.65px;" width="48" height="48" viewBox="0 0 48 48"><rect x="16.500" y="12.700" width="24.500" height="24.500" fill="none" stroke="#c6c6c6" stroke-width="2.400"/><rect x="14.1" y="34.8" width="4.800" height="4.800" fill="#c6c6c6"/><rect x="26.3" y="34.8" width="4.800" height="4.800" fill="#c6c6c6"/><rect x="38.6" y="34.8" width="4.800" height="4.800" fill="#c6c6c6"/><rect x="38.6" y="22.6" width="4.800" height="4.800" fill="#c6c6c6"/><rect x="38.6" y="10.3" width="4.800" height="4.800" fill="#c6c6c6"/><rect x="26.3" y="10.3" width="4.800" height="4.800" fill="#c6c6c6"/><rect x="14.1" y="10.3" width="4.800" height="4.800" fill="#c6c6c6"/><path d="M2 5.700 L23.700 25.600 L23.700 27 L10.700 27.500 L2 36.200 Z" fill="#c6c6c6" stroke="#535353" stroke-width="1.400"/></svg>
<svg style="left:131.4px;top:619.85px;" width="8.8" height="8.8" viewBox="0 0 8.8 8.8"><path d="M8.8 0 L8.8 8.8 L0 8.8 Z" fill="#c6c6c6"/></svg>
<svg style="left:22.5px;top:635.1px;" width="48" height="48" viewBox="0 0 48 48"><ellipse cx="14.600" cy="22.500" rx="8.800" ry="10" fill="none" stroke="#c6c6c6" stroke-width="2.200"/><ellipse cx="28.500" cy="21.600" rx="11.500" ry="13.800" fill="none" stroke="#a8a8a8" stroke-width="2.200"/><path d="M9.100 21.600 L31 21.600" stroke="#c6c6c6" stroke-width="1.800" stroke-dasharray="2.600 1.800"/><path d="M31.600 19.900 L49.300 34.900 L49.300 36 L38.500 36.300 L31.600 43.700 Z" fill="#c6c6c6" stroke="#535353" stroke-width="1.800"/></svg>
<svg style="left:66.5px;top:672.3px;" width="8.8" height="8.8" viewBox="0 0 8.8 8.8"><path d="M8.8 0 L8.8 8.8 L0 8.8 Z" fill="#c6c6c6"/></svg>
<svg style="left:90px;top:635.1px;" width="48" height="48" viewBox="0 0 48 48"><path d="M2.900 7.100 L25.900 14.600 L25.900 24.300 L2.900 42.800 Z M2.900 23.400 L25.900 19.900 M12.200 10.200 L12.200 35.200 M19.700 12.600 L19.700 29.300" fill="none" stroke="#c6c6c6" stroke-width="2.200"/><rect x="26.5" y="24.3" width="5.5" height="2.600" fill="#828282"/><rect x="22.5" y="28.3" width="13.1" height="2.600" fill="#828282"/><rect x="17" y="32.8" width="22.1" height="2.600" fill="#828282"/><rect x="11.8" y="37" width="30.8" height="2.600" fill="#828282"/><rect x="6" y="41.1" width="37.5" height="2.600" fill="#828282"/></svg>
<svg style="left:131.4px;top:672.3px;" width="8.8" height="8.8" viewBox="0 0 8.8 8.8"><path d="M8.8 0 L8.8 8.8 L0 8.8 Z" fill="#c6c6c6"/></svg>
<svg style="left:22.5px;top:687.55px;" width="48" height="48" viewBox="0 0 48 48"><rect x="8.600" y="10.200" width="32.700" height="29.600" fill="#4b4b4b" stroke="#c6c6c6" stroke-width="2.600"/><path d="M28.200 9.800 C32 15 33.500 21 32.600 26.500 C32 31 31 35 30 39.800 M32.600 26.500 L42 26.500 M8.700 23 C13 19 17 17 21 17.700 C25.500 18.500 29.500 22.500 32.600 26.500 M19.700 10.700 C20.800 20 20.800 30 20.100 38.900 M8.700 35.400 C12 31.500 15.500 29.700 18.400 30 C23 30.500 27 34 29.800 38" fill="none" stroke="#c6c6c6" stroke-width="1.900"/></svg>
<svg style="left:90px;top:687.55px;" width="48" height="48" viewBox="0 0 48 48"><defs><linearGradient id="tg" x1="0" x2="1" y1="0" y2="0"><stop offset="0" stop-color="#383838"/><stop offset="1" stop-color="#cfcfcf"/></linearGradient></defs><rect x="5.800" y="10" width="33.100" height="30" fill="url(#tg)" stroke="#c6c6c6" stroke-width="2.200"/></svg>
<svg style="left:22.5px;top:740px;" width="48" height="48" viewBox="0 0 48 48"><path d="M6 31.900 L18.400 43.400 M31.200 7.700 L43.100 18.700" stroke="#c6c6c6" stroke-width="2"/><path d="M17.500 32.500 L33.500 18" stroke="#c6c6c6" stroke-width="6"/><path d="M10.800 38.500 L13.500 27 L23.500 37.500 Z M39.700 12 L27 13.500 L37 23.500 Z" fill="#c6c6c6"/><path d="M16.800 22.500 L20.800 18.500" stroke="#c6c6c6" stroke-width="4.400" stroke-linecap="round"/></svg>
<svg style="left:90px;top:740px;" width="48" height="48" viewBox="0 0 48 48"><path d="M27.500 18.500 L6.500 36.500 C4 39 3.300 41 4.800 42.300 C6.300 43.600 8.500 43 11 40.500 L32.500 22.500" fill="none" stroke="#c6c6c6" stroke-width="2.300"/><path d="M25.500 14.500 L29 11 L31 13 C33 8 38.500 5.500 42 8.500 C45.500 11.500 44 16.500 39.500 19.500 L41.500 21.500 L38 25 Z" fill="#c6c6c6"/></svg>
<svg style="left:131.4px;top:777.2px;" width="8.8" height="8.8" viewBox="0 0 8.8 8.8"><path d="M8.8 0 L8.8 8.8 L0 8.8 Z" fill="#c6c6c6"/></svg>
<svg style="left:22.5px;top:792.45px;" width="48" height="48" viewBox="0 0 48 48"><rect x="3.800" y="9" width="19" height="19" fill="#c6c6c6"/><circle cx="24.500" cy="24.900" r="8.800" fill="#8c8c8c" stroke="#c6c6c6" stroke-width="2"/><circle cx="36" cy="32.200" r="8.200" fill="#535353" stroke="#c6c6c6" stroke-width="2.600"/></svg>
<svg style="left:90px;top:792.45px;" width="48" height="48" viewBox="0 0 48 48"><rect x="20.600" y="17.900" width="20.600" height="23.700" rx="1.500" fill="none" stroke="#c6c6c6" stroke-width="2.800"/><rect x="26.300" y="10.800" width="9.300" height="6" fill="#c6c6c6"/><path d="M24.500 11.700 L24.500 9.800 C24.500 5.800 35.600 5.800 35.600 9.800 L35.600 11.700 Z" fill="#c6c6c6"/><circle cx="30.700" cy="29.700" r="5.300" fill="none" stroke="#c6c6c6" stroke-width="3"/><path d="M2.3 12.1 l1.900 -1.900 l1.900 1.900 l-1.900 1.900 Z" fill="#c6c6c6" stroke="#c6c6c6" stroke-width="0.800"/><path d="M9 12.1 l1.900 -1.900 l1.900 1.900 l-1.900 1.900 Z" fill="#c6c6c6" stroke="#c6c6c6" stroke-width="0.800"/><path d="M16 12.1 l1.900 -1.900 l1.900 1.900 l-1.900 1.900 Z" fill="#c6c6c6" stroke="#c6c6c6" stroke-width="0.800"/><path d="M2.3 18.7 l1.900 -1.900 l1.900 1.900 l-1.900 1.900 Z" fill="#c6c6c6" stroke="#c6c6c6" stroke-width="0.800"/><path d="M9 18.7 l1.900 -1.900 l1.900 1.900 l-1.900 1.900 Z" fill="#c6c6c6" stroke="#c6c6c6" stroke-width="0.800"/><path d="M2.3 25.8 l1.900 -1.900 l1.900 1.900 l-1.900 1.900 Z" fill="#c6c6c6" stroke="#c6c6c6" stroke-width="0.800"/></svg>
<svg style="left:131.4px;top:829.65px;" width="8.8" height="8.8" viewBox="0 0 8.8 8.8"><path d="M8.8 0 L8.8 8.8 L0 8.8 Z" fill="#c6c6c6"/></svg>
<svg style="left:22.5px;top:844.9px;" width="48" height="48" viewBox="0 0 48 48"><path d="M5.500 7.300 L5.500 40.100 L44.800 40.100" fill="none" stroke="#c6c6c6" stroke-width="3.200"/><rect x="13.100" y="23.200" width="7.900" height="16" fill="#c6c6c6"/><rect x="24.500" y="9.500" width="7.100" height="30" fill="#c6c6c6"/><rect x="35.600" y="14.300" width="7" height="25" fill="#c6c6c6"/></svg>
<svg style="left:66.5px;top:882.1px;" width="8.8" height="8.8" viewBox="0 0 8.8 8.8"><path d="M8.8 0 L8.8 8.8 L0 8.8 Z" fill="#c6c6c6"/></svg>
<svg style="left:90px;top:844.9px;" width="48" height="48" viewBox="0 0 48 48"><path d="M11.800 5.500 L11.800 14.500 M-0.600 17.900 L8.200 17.900" stroke="#c6c6c6" stroke-width="2.500"/><path d="M11.300 17.400 L29.800 17.400 L36.500 24 L36.500 40.400 L11.300 40.400 Z" fill="#6e6e6e" stroke="#c6c6c6" stroke-width="2.600"/><path d="M29.800 16.500 L37.500 24 L29.800 24 Z" fill="#c6c6c6"/></svg>
<svg style="left:22.5px;top:897.35px;" width="48" height="48" viewBox="0 0 48 48"><path d="M5.100 43.500 L27 18.200 L35.500 23.500 L30.400 32 Z" fill="none" stroke="#c6c6c6" stroke-width="2.300" stroke-linejoin="miter"/><path d="M26.300 17.500 L30.800 8.500 C31.500 7 33 6.800 34.300 7.700 L43.200 14 C44.500 15 44.700 16.300 43.800 17.500 L37 25.500 Z" fill="#c6c6c6"/></svg>
<svg style="left:66.5px;top:934.55px;" width="8.8" height="8.8" viewBox="0 0 8.8 8.8"><path d="M8.8 0 L8.8 8.8 L0 8.8 Z" fill="#c6c6c6"/></svg>
<svg style="left:90px;top:897.35px;" width="48" height="48" viewBox="0 0 48 48"><g transform="translate(-0.200 3.200) scale(0.940 0.970)"><path d="M17 26 L14.500 10.500 C14 7.500 18 7 18.700 10 L21 21 L21.500 6.500 C21.500 3.500 26 3.500 26 6.500 L26.500 20.500 L29.500 8 C30.200 5 34.300 6 33.700 9 L31.500 22.500 L36.500 14.500 C38 12 41.500 14 40.200 16.500 L34.500 29 C33.500 35 31 41 25.500 41.500 C20 42 16 39 13 34.500 L6.500 25 C5 22.500 8 20 10.500 22 Z" fill="#c6c6c6"/></g></svg>
<svg style="left:131.4px;top:934.55px;" width="8.8" height="8.8" viewBox="0 0 8.8 8.8"><path d="M8.8 0 L8.8 8.8 L0 8.8 Z" fill="#c6c6c6"/></svg>
<svg style="left:22.5px;top:949.8px;" width="48" height="48" viewBox="0 0 48 48"><circle cx="20.350" cy="21.500" r="11.800" fill="none" stroke="#c6c6c6" stroke-width="2.600"/><path d="M29.200 30.800 L41 41" stroke="#c6c6c6" stroke-width="5" stroke-linecap="butt"/></svg>
<div style="left:13px;top:1006px;width:132px;height:1.5px;background:#474747;"></div><svg style="left:52px;top:1057px;" width="79" height="78" viewBox="0 0 79 78"><rect x="1.200" y="1.200" width="76.600" height="75.600" fill="#ffffff" stroke="#6e6e6e" stroke-width="1.600"/><rect x="22.500" y="22" width="35" height="34" fill="#535353" stroke="#3c3c3c" stroke-width="3"/><path d="M3 75 L76 3" stroke="#ff0000" stroke-width="4.600"/></svg>
<div style="left:13px;top:1017px;width:78px;height:78px;background:#535353;border:2px solid #383838;box-sizing:border-box;"></div><span style="left:43.45px;top:1043.11px;font-size:30px;line-height:30px;color:#e4e8ee;-webkit-text-stroke:0.5px #e4e8ee;">?</span>
<svg style="left:110px;top:1018px;" width="28" height="28" viewBox="0 0 28 28"><path d="M9 8 C18 8 20.500 12 20.500 19" fill="none" stroke="#6c6c6c" stroke-width="4"/><path d="M1 8 L10 1 L10 15 Z M20.500 27 L13.500 18 L27.500 18 Z" fill="#6c6c6c"/></svg>
<svg style="left:13.5px;top:1107.5px;" width="29" height="28" viewBox="0 0 29 28"><rect x="9.500" y="9" width="18" height="17.500" fill="#000000" stroke="#d8d8d8" stroke-width="1.400"/><rect x="13.500" y="13" width="9" height="9" fill="#535353"/><rect x="1.500" y="1.500" width="17" height="16.500" fill="#ffffff" stroke="#000000" stroke-width="2.600"/><rect x="0.5" y="0.5" width="19" height="18.500" fill="none" stroke="#d8d8d8" stroke-width="1"/></svg>
<div style="left:13px;top:1149.5px;width:127px;height:43px;background:#565656;border-radius:3px;"></div>
<div style="left:55.5px;top:1150px;width:1.5px;height:42px;background:#4c4c4c;"></div>
<div style="left:99px;top:1149.5px;width:41px;height:43px;background:#3a3a3a;border-radius:3px;"></div><svg style="left:18.5px;top:1156.5px;" width="31" height="30" viewBox="0 0 31 30"><rect x="1.500" y="1.500" width="28" height="27" fill="#ffffff" stroke="#000000" stroke-width="3"/></svg>
<svg style="left:62.5px;top:1156.5px;" width="31" height="30" viewBox="0 0 31 30"><defs><linearGradient id="cg" x1="0" x2="1" y1="0" y2="0"><stop offset="0" stop-color="#ffffff"/><stop offset="1" stop-color="#000000"/></linearGradient></defs><rect x="1.500" y="1.500" width="28" height="27" fill="url(#cg)" stroke="#000000" stroke-width="3"/></svg>
<svg style="left:106.5px;top:1156.5px;" width="31" height="30" viewBox="0 0 31 30"><rect x="1.500" y="1.500" width="28" height="27" fill="#ffffff" stroke="#000000" stroke-width="3"/><path d="M3 24.500 L28 4.500" stroke="#ff0000" stroke-width="6.500"/><rect x="1.500" y="1.500" width="28" height="27" fill="none" stroke="#000000" stroke-width="3"/></svg>
<div style="left:14.5px;top:1204px;width:126px;height:39px;background:#575757;border-radius:3px;box-shadow:0 0 0 1px #5e5e5e;"></div>
<div style="left:14.5px;top:1204px;width:39.5px;height:39px;background:#333333;border-radius:3px 0 0 3px;"></div>
<div style="left:98.5px;top:1204.5px;width:1.5px;height:38px;background:#4c4c4c;"></div><svg style="left:22px;top:1211.5px;" width="27" height="26" viewBox="0 0 27 26"><circle cx="12" cy="11" r="9" fill="none" stroke="#bdbdbd" stroke-width="2.400"/><rect x="12" y="13" width="13" height="11.500" rx="1.500" fill="#c4c4c4"/></svg>
<svg style="left:65.5px;top:1211.5px;" width="27" height="26" viewBox="0 0 27 26"><rect x="12" y="13" width="13" height="11.500" rx="1.500" fill="#c4c4c4"/><circle cx="12" cy="11" r="9" fill="#575757" stroke="#bdbdbd" stroke-width="2.400"/></svg>
<svg style="left:110px;top:1213px;" width="22" height="22" viewBox="0 0 22 22"><circle cx="10.500" cy="10.500" r="8.500" fill="none" stroke="#6c6c6c" stroke-width="2.200"/><path d="M10.500 10.500 L19 10.500 A8.500 8.500 0 0 1 10.500 19 Z" fill="#6c6c6c"/></svg>
<svg style="left:54px;top:1261.5px;" width="50" height="37" viewBox="0 0 50 37"><rect x="1.500" y="10.500" width="28" height="24.500" fill="#6a6a6a" stroke="#c6c6c6" stroke-width="2.400"/><rect x="1" y="10" width="29" height="5" fill="#c6c6c6"/><rect x="19.500" y="1.500" width="28.500" height="23.500" fill="#6a6a6a" stroke="#c6c6c6" stroke-width="2.400"/><rect x="19" y="1" width="29.500" height="5" fill="#c6c6c6"/></svg>
<svg style="left:62px;top:1345px;" width="34" height="10" viewBox="0 0 34 10"><circle cx="5" cy="5" r="4" fill="#c6c6c6"/><circle cx="16.500" cy="5" r="4" fill="#c6c6c6"/><circle cx="28" cy="5" r="4" fill="#c6c6c6"/></svg>
<!-- right dock -->
<div style="left:2735.5px;top:319.8px;width:84px;height:2px;background:#3d3d3d;"></div>
<div style="left:2735.5px;top:533.3px;width:84px;height:2px;background:#3d3d3d;"></div>
<div style="left:2735.5px;top:745.8px;width:84px;height:2px;background:#3d3d3d;"></div>
<div style="left:2735.5px;top:896.3px;width:84px;height:2px;background:#3d3d3d;"></div>
<div style="left:2735.5px;top:1046.8px;width:84px;height:2px;background:#3d3d3d;"></div>
<div style="left:2735.5px;top:1383.3px;width:84px;height:2px;background:#3d3d3d;"></div><svg style="left:2757.7px;top:177.5px;" width="43" height="10" viewBox="0 0 43 10"><rect x="0" y="0" width="1.400" height="9.500" fill="#3a3a3a"/><rect x="3.2" y="0" width="1.400" height="9.500" fill="#3a3a3a"/><rect x="8.97" y="0" width="1.400" height="9.500" fill="#3a3a3a"/><rect x="12.17" y="0" width="1.400" height="9.500" fill="#3a3a3a"/><rect x="17.94" y="0" width="1.400" height="9.500" fill="#3a3a3a"/><rect x="21.14" y="0" width="1.400" height="9.500" fill="#3a3a3a"/><rect x="26.91" y="0" width="1.400" height="9.500" fill="#3a3a3a"/><rect x="30.11" y="0" width="1.400" height="9.500" fill="#3a3a3a"/><rect x="35.88" y="0" width="1.400" height="9.500" fill="#3a3a3a"/><rect x="39.08" y="0" width="1.400" height="9.500" fill="#3a3a3a"/></svg>
<svg style="left:2757.7px;top:328px;" width="43" height="10" viewBox="0 0 43 10"><rect x="0" y="0" width="1.400" height="9.500" fill="#3a3a3a"/><rect x="3.2" y="0" width="1.400" height="9.500" fill="#3a3a3a"/><rect x="8.97" y="0" width="1.400" height="9.500" fill="#3a3a3a"/><rect x="12.17" y="0" width="1.400" height="9.500" fill="#3a3a3a"/><rect x="17.94" y="0" width="1.400" height="9.500" fill="#3a3a3a"/><rect x="21.14" y="0" width="1.400" height="9.500" fill="#3a3a3a"/><rect x="26.91" y="0" width="1.400" height="9.500" fill="#3a3a3a"/><rect x="30.11" y="0" width="1.400" height="9.500" fill="#3a3a3a"/><rect x="35.88" y="0" width="1.400" height="9.500" fill="#3a3a3a"/><rect x="39.08" y="0" width="1.400" height="9.500" fill="#3a3a3a"/></svg>
<svg style="left:2757.7px;top:541px;" width="43" height="10" viewBox="0 0 43 10"><rect x="0" y="0" width="1.400" height="9.500" fill="#3a3a3a"/><rect x="3.2" y="0" width="1.400" height="9.500" fill="#3a3a3a"/><rect x="8.97" y="0" width="1.400" height="9.500" fill="#3a3a3a"/><rect x="12.17" y="0" width="1.400" height="9.500" fill="#3a3a3a"/><rect x="17.94" y="0" width="1.400" height="9.500" fill="#3a3a3a"/><rect x="21.14" y="0" width="1.400" height="9.500" fill="#3a3a3a"/><rect x="26.91" y="0" width="1.400" height="9.500" fill="#3a3a3a"/><rect x="30.11" y="0" width="1.400" height="9.500" fill="#3a3a3a"/><rect x="35.88" y="0" width="1.400" height="9.500" fill="#3a3a3a"/><rect x="39.08" y="0" width="1.400" height="9.500" fill="#3a3a3a"/></svg>
<svg style="left:2757.7px;top:753.5px;" width="43" height="10" viewBox="0 0 43 10"><rect x="0" y="0" width="1.400" height="9.500" fill="#3a3a3a"/><rect x="3.2" y="0" width="1.400" height="9.500" fill="#3a3a3a"/><rect x="8.97" y="0" width="1.400" height="9.500" fill="#3a3a3a"/><rect x="12.17" y="0" width="1.400" height="9.500" fill="#3a3a3a"/><rect x="17.94" y="0" width="1.400" height="9.500" fill="#3a3a3a"/><rect x="21.14" y="0" width="1.400" height="9.500" fill="#3a3a3a"/><rect x="26.91" y="0" width="1.400" height="9.500" fill="#3a3a3a"/><rect x="30.11" y="0" width="1.400" height="9.500" fill="#3a3a3a"/><rect x="35.88" y="0" width="1.400" height="9.500" fill="#3a3a3a"/><rect x="39.08" y="0" width="1.400" height="9.500" fill="#3a3a3a"/></svg>
<svg style="left:2757.7px;top:904px;" width="43" height="10" viewBox="0 0 43 10"><rect x="0" y="0" width="1.400" height="9.500" fill="#3a3a3a"/><rect x="3.2" y="0" width="1.400" height="9.500" fill="#3a3a3a"/><rect x="8.97" y="0" width="1.400" height="9.500" fill="#3a3a3a"/><rect x="12.17" y="0" width="1.400" height="9.500" fill="#3a3a3a"/><rect x="17.94" y="0" width="1.400" height="9.500" fill="#3a3a3a"/><rect x="21.14" y="0" width="1.400" height="9.500" fill="#3a3a3a"/><rect x="26.91" y="0" width="1.400" height="9.500" fill="#3a3a3a"/><rect x="30.11" y="0" width="1.400" height="9.500" fill="#3a3a3a"/><rect x="35.88" y="0" width="1.400" height="9.500" fill="#3a3a3a"/><rect x="39.08" y="0" width="1.400" height="9.500" fill="#3a3a3a"/></svg>
<svg style="left:2757.7px;top:1055.5px;" width="43" height="10" viewBox="0 0 43 10"><rect x="0" y="0" width="1.400" height="9.500" fill="#3a3a3a"/><rect x="3.2" y="0" width="1.400" height="9.500" fill="#3a3a3a"/><rect x="8.97" y="0" width="1.400" height="9.500" fill="#3a3a3a"/><rect x="12.17" y="0" width="1.400" height="9.500" fill="#3a3a3a"/><rect x="17.94" y="0" width="1.400" height="9.500" fill="#3a3a3a"/><rect x="21.14" y="0" width="1.400" height="9.500" fill="#3a3a3a"/><rect x="26.91" y="0" width="1.400" height="9.500" fill="#3a3a3a"/><rect x="30.11" y="0" width="1.400" height="9.500" fill="#3a3a3a"/><rect x="35.88" y="0" width="1.400" height="9.500" fill="#3a3a3a"/><rect x="39.08" y="0" width="1.400" height="9.500" fill="#3a3a3a"/></svg>
<svg style="left:2758px;top:205px;" width="44" height="33" viewBox="0 0 44 33"><path d="M22 1.500 C34 1.500 42.500 8 42.500 16.500 C42.500 26 33 31.500 22 31.500 C9 31.500 1 26.500 1 19.500 C1 13.500 7 12 12 13.500 C16 14.500 17.500 12 16.500 9 C15 4.500 18 1.500 22 1.500 Z" fill="#c6c6c6"/><circle cx="9.500" cy="21" r="3.300" fill="#535353"/><circle cx="18.500" cy="25.500" r="3.300" fill="#686868"/><circle cx="28.500" cy="24.500" r="3.300" fill="#686868"/><circle cx="35.500" cy="18" r="3.300" fill="#686868"/><circle cx="33.500" cy="10" r="2.600" fill="#686868"/></svg>
<svg style="left:2762px;top:265.5px;" width="38" height="36" viewBox="0 0 38 36"><path d="M2 34 L2 1 A33 33 0 0 1 10.54 2.12 Z" fill="#1c1c1c"/><path d="M2 34 L10.54 2.12 A33 33 0 0 1 18.5 5.42 Z" fill="#3f3f3f"/><path d="M2 34 L18.5 5.42 A33 33 0 0 1 25.33 10.67 Z" fill="#686868"/><path d="M2 34 L25.33 10.67 A33 33 0 0 1 30.58 17.5 Z" fill="#909090"/><path d="M2 34 L30.58 17.5 A33 33 0 0 1 33.88 25.46 Z" fill="#b9b9b9"/><path d="M2 34 L33.88 25.46 A33 33 0 0 1 35 34 Z" fill="#f1f1f1"/><path d="M2 1 A33 33 0 0 1 35 34 L2 34 Z" fill="none" stroke="#c6c6c6" stroke-width="2.200"/></svg>
<svg style="left:2761px;top:362.5px;" width="36" height="25" viewBox="0 0 36 25"><rect x="0" y="0" width="36" height="25" fill="#c6c6c6"/><rect x="2.5" y="3.5" width="9" height="8.500" fill="#7e7e7e"/><rect x="13.5" y="3.5" width="9" height="8.500" fill="#a9a9a9"/><rect x="24.5" y="3.5" width="9" height="8.500" fill="#8a8a8a"/><rect x="2.5" y="14" width="9" height="8.500" fill="#9a9a9a"/><rect x="13.5" y="14" width="9" height="8.500" fill="#868686"/><rect x="24.5" y="14" width="9" height="8.500" fill="#a4a4a4"/></svg>
<svg style="left:2762px;top:412px;" width="38" height="46" viewBox="0 0 38 46"><rect x="8.500" y="29" width="20" height="16" fill="#c6c6c6"/><path d="M11 28 L5.500 13 C4 9 7.500 6 9 2 C11.500 7 13 13 12.500 17 Z" fill="#c6c6c6"/><path d="M16.500 28 L15 9 C14 6 15 2.500 17 1 C19.500 3 20 6.500 19 9.500 L19.500 28 Z" fill="#c6c6c6"/><path d="M23 28 L27.500 15 C25.500 12 28 8.500 31.500 8.500 C35 8.500 37 11 36.500 13.500 C34 13.500 31.500 14.500 30 16.500 L26 28 Z" fill="#c6c6c6"/></svg>
<svg style="left:2761px;top:477px;" width="38" height="38" viewBox="0 0 38 38"><circle cx="19" cy="9.500" r="8.500" fill="#c6c6c6"/><circle cx="9.500" cy="21.500" r="8.500" fill="#c6c6c6"/><circle cx="28.500" cy="21.500" r="8.500" fill="#c6c6c6"/><path d="M17 17 L21 17 L21 30 C22 33.500 25 35.500 29 36 L29 37.500 L9 37.500 L9 36 C13 35.500 16 33.500 17 30 Z" fill="#c6c6c6"/></svg>
<svg style="left:2760.5px;top:571px;" width="38" height="28" viewBox="0 0 38 28"><rect x="0" y="0" width="38" height="2.800" fill="#c6c6c6"/><rect x="0" y="9" width="38" height="5" fill="#c6c6c6"/><rect x="0" y="20" width="38" height="8" fill="#c6c6c6"/></svg>
<svg style="left:2760px;top:633px;" width="39" height="28" viewBox="0 0 39 28"><defs><linearGradient id="rg" x1="0" x2="1" y1="0" y2="0"><stop offset="0" stop-color="#2e2e2e"/><stop offset="1" stop-color="#e0e0e0"/></linearGradient></defs><rect x="1.300" y="1.300" width="36.400" height="25.400" fill="url(#rg)" stroke="#c6c6c6" stroke-width="2.400"/></svg>
<svg style="left:2757.5px;top:690px;" width="42" height="40" viewBox="0 0 42 40"><circle cx="15.500" cy="15.500" r="14.500" fill="#c6c6c6"/><circle cx="25.500" cy="25.500" r="12.500" fill="#767676" stroke="#c6c6c6" stroke-width="2.600"/><path d="M13.200 23 A12.500 12.500 0 0 1 33 15.500 A14.500 14.500 0 0 1 13.200 23 Z" fill="#8f8f8f"/></svg>
<svg style="left:2759px;top:778px;" width="41" height="41" viewBox="0 0 41 41"><circle cx="20.500" cy="20.500" r="18" fill="none" stroke="#c6c6c6" stroke-width="2.200" stroke-dasharray="4.500 3.100"/><circle cx="20.500" cy="20.500" r="12.500" fill="#c6c6c6"/></svg>
<svg style="left:2759.5px;top:842px;" width="41" height="38" viewBox="0 0 41 38"><rect x="10.500" y="1.500" width="28.500" height="28.500" fill="none" stroke="#c6c6c6" stroke-width="2.600"/><rect x="7" y="22.500" width="13" height="13" fill="#535353" stroke="#c6c6c6" stroke-width="2.400"/><rect x="1.500" y="17" width="12" height="12" fill="#535353" stroke="#c6c6c6" stroke-width="2.400"/></svg>
<svg style="left:2759.5px;top:927px;" width="42" height="42" viewBox="0 0 42 42"><path d="M19 7.500 L2 7.500 L2 40 L35 40 L35 23.500" fill="none" stroke="#c6c6c6" stroke-width="3.400"/><path d="M22 20 L38 4" stroke="#c6c6c6" stroke-width="3.400"/><path d="M27 2 L40 2 L40 15" fill="none" stroke="#c6c6c6" stroke-width="3.400"/></svg>
<svg style="left:2756.5px;top:988px;" width="44" height="42" viewBox="0 0 44 42"><rect x="1.500" y="1.500" width="23.500" height="29" fill="none" stroke="#c6c6c6" stroke-width="2.600"/><rect x="12" y="16" width="29.500" height="24" fill="#535353" stroke="#c6c6c6" stroke-width="2.600"/></svg>
<svg style="left:2761px;top:1079.5px;" width="38" height="42" viewBox="0 0 38 42"><path d="M1.500 34.500 L13.500 6 L17.500 6 L29.500 34.500 L25 34.500 L21.700 26 L9.300 26 L6 34.500 Z M10.700 22.500 L20.300 22.500 L15.500 10.500 Z" fill="#c6c6c6"/><rect x="32" y="1" width="2.400" height="40" fill="#c6c6c6"/></svg>
<svg style="left:2763px;top:1148px;" width="29" height="34" viewBox="0 0 29 34"><path d="M12 0.500 L26.500 0.500 L26.500 33.500 L23.500 33.500 L23.500 3.500 L19.500 3.500 L19.500 33.500 L16.500 33.500 L16.500 19.500 L12 19.500 C-1 19.500 -1 0.500 12 0.500 Z" fill="#c6c6c6"/></svg>
<svg style="left:2761px;top:1205.5px;" width="35" height="38" viewBox="0 0 35 38"><path d="M22 1 C30 1 34 7.500 32.500 17 C30.500 29 22 37 13.500 37 C5 37 1.500 30 3 21 C5 9 13.500 1 22 1 Z M21 3.500 C16.500 3.500 12 11 10 21 C8.500 30 9.500 34.500 13.500 34.500 C18 34.500 22.500 27 24.500 17 C26 9 25.500 3.500 21 3.500 Z" fill="#c6c6c6" fill-rule="evenodd"/></svg>
<svg style="left:2759.5px;top:1264.5px;" width="42" height="42" viewBox="0 0 42 42"><rect x="6" y="27.5" width="12" height="12" fill="#535353" stroke="#c6c6c6" stroke-width="2.200"/><rect x="1.500" y="21.5" width="11" height="11" fill="#535353" stroke="#c6c6c6" stroke-width="2.200"/><path d="M17.500 26.500 L27 1.500 L31 1.500 L40.500 26.500 L36.500 26.500 L33.700 19 L24.300 19 L21.500 26.500 Z M25.500 15.700 L32.500 15.700 L29 5.500 Z" fill="#c6c6c6"/></svg>
<svg style="left:2759.5px;top:1327.5px;" width="40" height="40" viewBox="0 0 40 40"><rect x="6" y="25.5" width="12" height="12" fill="#535353" stroke="#c6c6c6" stroke-width="2.200"/><rect x="1.500" y="19.5" width="11" height="11" fill="#535353" stroke="#c6c6c6" stroke-width="2.200"/><path d="M25 0.500 L37 0.500 L37 26.500 L34.500 26.500 L34.500 3 L31 3 L31 26.500 L28.500 26.500 L28.500 15 L25 15 C14 15 14 0.500 25 0.500 Z" fill="#c6c6c6"/></svg>
<div style="left:2927.5px;top:171px;width:434.5px;height:58.5px;background:#424242;"></div>
<div style="left:2927.5px;top:227.5px;width:434.5px;height:2px;background:#3c3c3c;"></div>
<div style="left:3073.5px;top:171px;width:1.5px;height:57px;background:#3b3b3b;"></div>
<div style="left:3202.5px;top:171px;width:1.5px;height:57px;background:#3b3b3b;"></div><span style="left:2845.07px;top:189.36px;font-size:20.6px;line-height:20.6px;color:#ffffff;letter-spacing:0.1px;-webkit-text-stroke:0.55px #ffffff;">Layers</span>
<span style="left:2948.07px;top:189.36px;font-size:20.6px;line-height:20.6px;color:#b6b6b6;letter-spacing:1.05px;-webkit-text-stroke:0.55px #b6b6b6;">Properties</span>
<span style="left:3093.57px;top:189.36px;font-size:20.6px;line-height:20.6px;color:#b6b6b6;letter-spacing:0.61px;-webkit-text-stroke:0.55px #b6b6b6;">Libraries</span>
<svg style="left:3326px;top:192px;" width="23" height="18" viewBox="0 0 23 18"><path d="M0 1.500 L23 1.500 M0 9 L23 9 M0 16.500 L23 16.500" stroke="#a8a8a8" stroke-width="2.400"/></svg>
<div style="left:2835.5px;top:244px;width:515px;height:73px;background:#565656;border-radius:5px;box-shadow:0 0 0 1px #595959;"></div>
<div style="left:2850px;top:254px;width:433.5px;height:47.5px;background:#434343;border-radius:5px;box-shadow:0 0 0 1.500px #5a5a5a;"></div><svg style="left:2862px;top:265px;" width="30" height="28" viewBox="0 0 30 28"><circle cx="11" cy="11" r="8.300" fill="none" stroke="#c6c6c6" stroke-width="2.600"/><path d="M17.500 17.500 L26 25" stroke="#c6c6c6" stroke-width="3.800" stroke-linecap="round"/></svg>
<span style="left:2911.33px;top:265.49px;font-size:26px;line-height:26px;color:#5b5b5b;letter-spacing:-0.69px;">Search All</span>
<svg style="left:3307px;top:263px;" width="32" height="33" viewBox="0 0 32 33"><path d="M0.500 0.500 L30.500 0.500 L18.500 16 L18.500 27 L12.500 32 L12.500 16 Z" fill="#c4c4c4"/></svg>
<div style="left:2836.5px;top:320.5px;width:512px;height:141px;background:#5a5a5a;"></div>
<div style="left:2836.3px;top:461px;width:1.2px;height:1167px;background:#5a5a5a;"></div>
<div style="left:3347.3px;top:461px;width:1.2px;height:1167px;background:#5a5a5a;"></div>
<div style="left:2836.5px;top:322.2px;width:511px;height:44.5px;background:#5a5a5a;"></div>
<div style="left:2837.6px;top:322.2px;width:42.5px;height:44.5px;background:#535353;"></div>
<div style="left:2884.1px;top:322.2px;width:43.3px;height:44.5px;background:#535353;"></div>
<div style="left:2940.2px;top:322.2px;width:328.8px;height:44.5px;background:#535353;"></div>
<div style="left:3271.2px;top:322.2px;width:76.3px;height:44.5px;background:#535353;"></div>
<div style="left:2836.5px;top:370px;width:511px;height:43.3px;background:#5b7189;"></div>
<div style="left:2837.6px;top:370px;width:42.5px;height:43.3px;background:#4d657f;"></div>
<div style="left:2884.1px;top:370px;width:43.3px;height:43.3px;background:#4d657f;"></div>
<div style="left:2940.2px;top:370px;width:328.8px;height:43.3px;background:#4d657f;"></div>
<div style="left:3271.2px;top:370px;width:76.3px;height:43.3px;background:#4d657f;"></div>
<div style="left:2836.5px;top:416px;width:511px;height:43.5px;background:#5a5a5a;"></div>
<div style="left:2837.6px;top:416px;width:42.5px;height:43.5px;background:#535353;"></div>
<div style="left:2884.1px;top:416px;width:43.3px;height:43.5px;background:#535353;"></div>
<div style="left:2940.2px;top:416px;width:328.8px;height:43.5px;background:#535353;"></div>
<div style="left:3271.2px;top:416px;width:76.3px;height:43.5px;background:#535353;"></div><svg style="left:2846.2px;top:336.4px;" width="29" height="19" viewBox="0 0 29 19"><path d="M1 9.500 C7 -1 22 -1 28 9.500 C22 20 7 20 1 9.500 Z" fill="#c4c4c4"/><circle cx="14.500" cy="9" r="5.600" fill="#535353"/><circle cx="14.500" cy="9" r="3.300" fill="#c4c4c4"/><circle cx="16.200" cy="7.200" r="1.700" fill="#535353"/></svg>
<svg style="left:2846.2px;top:382.8px;" width="29" height="19" viewBox="0 0 29 19"><path d="M1 9.500 C7 -1 22 -1 28 9.500 C22 20 7 20 1 9.500 Z" fill="#c4c4c4"/><circle cx="14.500" cy="9" r="5.600" fill="#535353"/><circle cx="14.500" cy="9" r="3.300" fill="#c4c4c4"/><circle cx="16.200" cy="7.200" r="1.700" fill="#535353"/></svg>
<svg style="left:2846.2px;top:429.3px;" width="29" height="19" viewBox="0 0 29 19"><path d="M1 9.500 C7 -1 22 -1 28 9.500 C22 20 7 20 1 9.500 Z" fill="#c4c4c4"/><circle cx="14.500" cy="9" r="5.600" fill="#535353"/><circle cx="14.500" cy="9" r="3.300" fill="#c4c4c4"/><circle cx="16.200" cy="7.200" r="1.700" fill="#535353"/></svg>
<div style="left:2931px;top:325.6px;width:7.3px;height:39.7px;background:#4a80ff;"></div>
<div style="left:2931px;top:371.9px;width:7.3px;height:40.1px;background:#4a80ff;"></div>
<div style="left:2931px;top:418px;width:7.3px;height:40.5px;background:#4a80ff;"></div><svg style="left:2957px;top:340.5px;" width="17" height="10" viewBox="0 0 17 10"><path d="M1.500 1.500 L8.500 8 L15.500 1.500" fill="none" stroke="#e0e0e0" stroke-width="2.800"/></svg>
<svg style="left:2996px;top:326.5px;" width="39.5" height="39" viewBox="0 0 39.5 39"><rect x="0" y="0" width="39.500" height="39" fill="#0d0d0d"/><rect x="2.200" y="2.200" width="35.100" height="34.600" fill="#ffffff"/><circle cx="8" cy="20" r="5.400" fill="#dda63a"/><path d="M4 20.500 L12 20.500 C11.500 25 4.500 25 4 20.500 Z" fill="#ffffff"/><circle cx="30.300" cy="19.800" r="5.700" fill="#0d0d0d"/><path d="M26.300 20.300 L34.300 20.300 C33.800 24.800 26.800 24.800 26.300 20.300 Z" fill="#ffffff"/></svg>
<span style="left:3044.99px;top:335.45px;font-size:22.5px;line-height:22.5px;color:#e6e6e6;letter-spacing:-0.59px;">Layer 1</span>
<svg style="left:3283.6px;top:335.6px;" width="20" height="20" viewBox="0 0 20 20"><circle cx="10" cy="10" r="7.700" fill="none" stroke="#d2d2d2" stroke-width="2.200"/></svg>
<div style="left:3314.9px;top:339px;width:12.6px;height:13.6px;background:#4a80ff;border:2px solid #161616;box-sizing:border-box;"></div><svg style="left:3333.7px;top:322.6px;" width="14.2" height="14.6" viewBox="0 0 14.2 14.6"><path d="M0 0 L14.200 0 L14.200 14.600 Z" fill="#c8c8c8"/></svg>
<svg style="left:3046.5px;top:372px;" width="39.5" height="39.5" viewBox="0 0 39.5 39.5"><rect x="0" y="0" width="39.5" height="39.5" fill="#0d0d0d"/><rect x="2.200" y="2.200" width="35.1" height="35.1" fill="#ffffff"/><circle cx="19.75" cy="20.05" r="16.400" fill="#0c0c0c"/><path d="M7.55 20.65 L31.95 20.65 C29.75 38.05 9.75 38.05 7.55 20.65 Z" fill="#ffffff"/><path d="M15.55 9.55 c-2.200 1.500 -2.200 3 -0.800 4.300 c1.300 1.300 1.300 2.600 0.300 4" fill="none" stroke="#ffffff" stroke-width="1.700"/><path d="M20.35 9.55 c-2.200 1.500 -2.200 3 -0.800 4.300 c1.300 1.300 1.300 2.600 0.300 4" fill="none" stroke="#ffffff" stroke-width="1.700"/><path d="M25.15 9.55 c-2.200 1.500 -2.200 3 -0.800 4.300 c1.300 1.300 1.300 2.600 0.300 4" fill="none" stroke="#ffffff" stroke-width="1.700"/></svg>
<span style="left:3094.99px;top:382.45px;font-size:22.5px;line-height:22.5px;color:#f4f4f4;letter-spacing:0.07px;">Image T...</span>
<svg style="left:3278.6px;top:378px;" width="30" height="30" viewBox="0 0 30 30"><circle cx="15" cy="15" r="12.700" fill="none" stroke="#a9b3bf" stroke-width="1.600"/><circle cx="15" cy="15" r="7.700" fill="none" stroke="#d2d2d2" stroke-width="2.200"/></svg>
<div style="left:3314.9px;top:383px;width:17.1px;height:17.1px;background:#4a80ff;border:2px solid #161616;box-sizing:border-box;"></div><svg style="left:3046.5px;top:419.5px;" width="39.5" height="39.5" viewBox="0 0 39.5 39.5"><rect x="0" y="0" width="39.5" height="39.5" fill="#0d0d0d"/><rect x="2.200" y="2.200" width="35.1" height="35.1" fill="#ffffff"/><circle cx="19.75" cy="20.05" r="16.400" fill="#dda63a"/><path d="M7.55 20.65 L31.95 20.65 C29.75 38.05 9.75 38.05 7.55 20.65 Z" fill="#ffffff"/><path d="M15.55 9.55 c-2.200 1.500 -2.200 3 -0.800 4.300 c1.300 1.300 1.300 2.600 0.300 4" fill="none" stroke="#ffffff" stroke-width="1.700"/><path d="M20.35 9.55 c-2.200 1.500 -2.200 3 -0.800 4.300 c1.300 1.300 1.300 2.600 0.300 4" fill="none" stroke="#ffffff" stroke-width="1.700"/><path d="M25.15 9.55 c-2.200 1.500 -2.200 3 -0.800 4.300 c1.300 1.300 1.300 2.600 0.300 4" fill="none" stroke="#ffffff" stroke-width="1.700"/></svg>
<span style="left:3096.49px;top:428.95px;font-size:22.5px;line-height:22.5px;color:#e6e6e6;letter-spacing:0.7px;">&lt;Image&gt;</span>
<svg style="left:3283.6px;top:428.5px;" width="20" height="20" viewBox="0 0 20 20"><circle cx="10" cy="10" r="7.700" fill="none" stroke="#d2d2d2" stroke-width="2.200"/></svg>
<!-- expand dialog -->
<div style="left:2053px;top:514px;width:484.5px;height:745.5px;background:#535353;border-radius:13px;box-shadow:0 0 0 1px rgba(110,110,110,0.55);overflow:hidden;"><div style="left:0px;top:0px;width:484.5px;height:64.5px;background:#f9f1e4;"></div></div><span style="left:2068.85px;top:534.41px;font-size:25.5px;line-height:25.5px;color:#111111;letter-spacing:-0.44px;">Expand</span>
<div style="left:2087.5px;top:646.5px;width:415px;height:212.5px;border:1.500px solid #484848;border-radius:3px;box-sizing:border-box;box-shadow:0 0 0 1px rgba(255,255,255,0.035);"></div>
<div style="left:2101px;top:640px;width:100px;height:14px;background:#535353;"></div><span style="left:2107.35px;top:633.91px;font-size:25.5px;line-height:25.5px;color:#d2d2d2;letter-spacing:0.06px;">Expand</span>
<div style="left:2109.5px;top:688.5px;width:27.5px;height:26px;background:#3f9bf4;border-radius:3.500px;"></div><svg style="left:2109.5px;top:688.5px;" width="27.5" height="26" viewBox="0 0 27.5 26"><path d="M5.500 13.500 L11.500 19.500 L21.500 7.500" fill="none" stroke="#3d4f66" stroke-width="4"/></svg>
<span style="left:2146.35px;top:689.41px;font-size:25.5px;line-height:25.5px;color:#ffffff;letter-spacing:0.82px;">Object</span>
<div style="left:2109.5px;top:743px;width:27.5px;height:26px;background:#c9c9c9;border-radius:3.500px;"></div><svg style="left:2109.5px;top:743px;" width="27.5" height="26" viewBox="0 0 27.5 26"><path d="M5.500 13.500 L11.500 19.500 L21.500 7.500" fill="none" stroke="#444444" stroke-width="4"/></svg>
<span style="left:2146.35px;top:745.41px;font-size:25.5px;line-height:25.5px;color:#ffffff;letter-spacing:0.24px;">Fill</span>
<div style="left:2110.5px;top:798.5px;width:25.5px;height:25px;border:2.200px solid #6d6d6d;border-radius:3px;box-sizing:border-box;"></div><span style="left:2146.35px;top:799.91px;font-size:25.5px;line-height:25.5px;color:#7c7c7c;letter-spacing:0.52px;">Stroke</span>
<div style="left:2087.5px;top:913px;width:415px;height:172.5px;border:1.500px solid #484848;border-radius:3px;box-sizing:border-box;box-shadow:0 0 0 1px rgba(255,255,255,0.035);"></div>
<div style="left:2101px;top:906px;width:243px;height:14px;background:#535353;"></div><span style="left:2107.35px;top:899.91px;font-size:25.5px;line-height:25.5px;color:#e6e6e6;letter-spacing:0.26px;">Expand Gradient To</span>
<div style="left:2110px;top:955.5px;width:28.5px;height:28px;border:2.200px solid #6d6d6d;border-radius:50%;box-sizing:border-box;"></div><span style="left:2146.35px;top:958.41px;font-size:25.5px;line-height:25.5px;color:#7c7c7c;letter-spacing:0.13px;">Gradient Mesh</span>
<div style="left:2110px;top:1017px;width:28.5px;height:28px;border:2.200px solid #6d6d6d;border-radius:50%;box-sizing:border-box;"></div><span style="left:2146.35px;top:1019.41px;font-size:25.5px;line-height:25.5px;color:#7c7c7c;letter-spacing:0.16px;">Specify:</span>
<div style="left:2246.5px;top:1008px;width:141.5px;height:45.5px;background:#5a5a5a;border-radius:4px;"></div><span style="left:2255.85px;top:1019.41px;font-size:25.5px;line-height:25.5px;color:#7c7c7c;letter-spacing:0.12px;">255</span>
<span style="left:2393.85px;top:1019.41px;font-size:25.5px;line-height:25.5px;color:#7c7c7c;letter-spacing:0.47px;">Objects</span>
<div style="left:2078px;top:1119px;width:230px;height:96.5px;border:4.500px solid #ff2d2d;box-sizing:border-box;"></div>
<div style="left:2090px;top:1134.5px;width:202px;height:58px;border:3.400px solid #ffffff;border-radius:29px;box-sizing:border-box;"></div><span style="left:2172.35px;top:1151.41px;font-size:25.5px;line-height:25.5px;color:#ffffff;letter-spacing:0.95px;">OK</span>
<div style="left:2305px;top:1134.5px;width:199px;height:58px;border:2.200px solid #d6d6d6;border-radius:29px;box-sizing:border-box;"></div><span style="left:2364.85px;top:1151.41px;font-size:25.5px;line-height:25.5px;color:#ffffff;letter-spacing:-0.22px;">Cancel</span>
<svg style="left:2240px;top:1100px;" width="150" height="160" viewBox="0 0 150 160"><defs><filter id="cs" x="-40%" y="-40%" width="200%" height="200%"><feGaussianBlur stdDeviation="9"/></filter></defs><path d="M37.200 32.100 L111.600 93.400 L67 95 L37.200 127 Z" fill="#000000" opacity="0.550" filter="url(#cs)" transform="translate(9 17)"/><path d="M37.200 32.100 L111.600 93.400 L67 95 L37.200 127 Z" fill="#000000" stroke="#ffffff" stroke-width="15" stroke-linejoin="round"/><path d="M37.200 32.100 L111.600 93.400 L67 95 L37.200 127 Z" fill="#000000"/></svg>
</div></body></html>
